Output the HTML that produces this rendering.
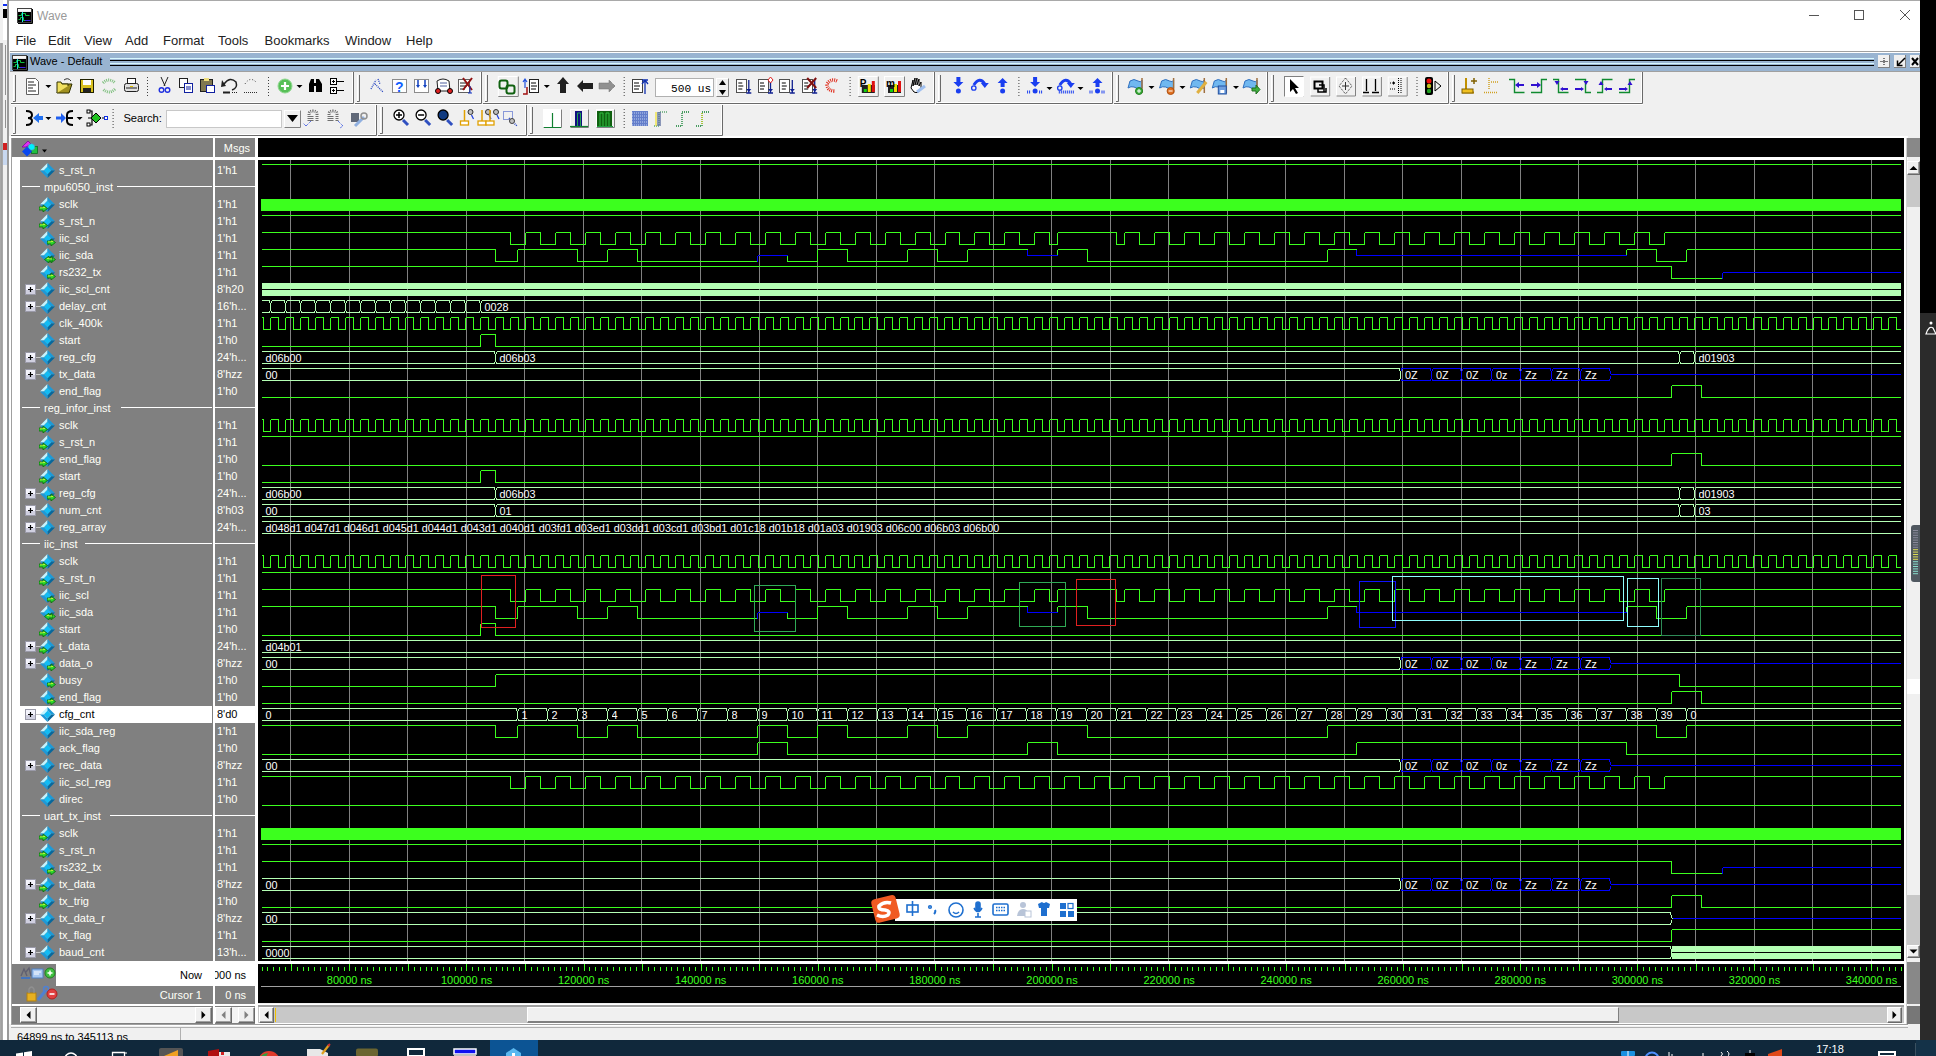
<!DOCTYPE html><html><head><meta charset="utf-8"><style>
html,body{margin:0;padding:0;width:1936px;height:1056px;overflow:hidden;background:#000;}
body{position:relative;font-family:"Liberation Sans", sans-serif;}
div{box-sizing:border-box;}
</style></head><body>
<div style="position:absolute;left:0px;top:0px;width:8px;height:1040px;background:#f0f0f0;"></div>
<div style="position:absolute;left:8px;top:0px;width:1912px;height:1040px;background:#f0f0f0;border-left:1px solid #a0a0a0;"></div>
<div style="position:absolute;left:8px;top:0px;width:1912px;height:1px;background:#a9a9a9;"></div>
<div style="position:absolute;left:9px;top:1px;width:1911px;height:50px;background:#fff;"></div>
<div style="position:absolute;left:37px;top:9px;font-size:12px;line-height:14px;color:#9a9a9a;white-space:nowrap;">Wave</div>
<div style="position:absolute;left:15.4px;top:33px;font-size:13px;line-height:15px;color:#222;white-space:nowrap;">File</div>
<div style="position:absolute;left:48px;top:33px;font-size:13px;line-height:15px;color:#222;white-space:nowrap;">Edit</div>
<div style="position:absolute;left:84px;top:33px;font-size:13px;line-height:15px;color:#222;white-space:nowrap;">View</div>
<div style="position:absolute;left:125px;top:33px;font-size:13px;line-height:15px;color:#222;white-space:nowrap;">Add</div>
<div style="position:absolute;left:163px;top:33px;font-size:13px;line-height:15px;color:#222;white-space:nowrap;">Format</div>
<div style="position:absolute;left:218px;top:33px;font-size:13px;line-height:15px;color:#222;white-space:nowrap;">Tools</div>
<div style="position:absolute;left:264.6px;top:33px;font-size:13px;line-height:15px;color:#222;white-space:nowrap;">Bookmarks</div>
<div style="position:absolute;left:345px;top:33px;font-size:13px;line-height:15px;color:#222;white-space:nowrap;">Window</div>
<div style="position:absolute;left:406px;top:33px;font-size:13px;line-height:15px;color:#222;white-space:nowrap;">Help</div>
<div style="position:absolute;left:10px;top:51px;width:1910px;height:1px;background:#a0a0a0;"></div>
<div style="position:absolute;left:10px;top:52px;width:1910px;height:1px;background:#fff;"></div>
<div style="position:absolute;left:10px;top:53px;width:1910px;height:18px;background:#99b4d1;"></div>
<div style="position:absolute;left:10px;top:71px;width:1910px;height:1px;background:#a0a0a0;"></div>
<div style="position:absolute;left:30px;top:55px;font-size:11px;line-height:13px;color:#000;white-space:nowrap;">Wave - Default</div>
<div style="position:absolute;left:110px;top:58px;width:1764px;height:1px;background:#d8f8ff;"></div>
<div style="position:absolute;left:110px;top:60px;width:1764px;height:1px;background:#000;"></div>
<div style="position:absolute;left:110px;top:63px;width:1764px;height:1px;background:#d8f8ff;"></div>
<div style="position:absolute;left:110px;top:65px;width:1764px;height:1px;background:#000;"></div>
<div style="position:absolute;left:11px;top:138px;width:247px;height:886px;background:#808080;"></div>
<div style="position:absolute;left:258px;top:138px;width:1646px;height:823px;background:#000;"></div>
<svg style="position:absolute;left:0;top:0" width="1936" height="140" fill="none"><path d="M352.5 72V102.5H11" stroke="#fff" fill="none"/><path d="M353.5 72V103.5H11" stroke="#6a6a6a" fill="none"/><path d="M13.5 75V101.5" stroke="#fff" fill="none"/><path d="M15.5 75V101.5H13" stroke="#6a6a6a" fill="none"/><path d="M480.5 72V102.5H355" stroke="#fff" fill="none"/><path d="M481.5 72V103.5H355" stroke="#6a6a6a" fill="none"/><path d="M357.5 75V101.5" stroke="#fff" fill="none"/><path d="M359.5 75V101.5H357" stroke="#6a6a6a" fill="none"/><path d="M933.5 72V102.5H483" stroke="#fff" fill="none"/><path d="M934.5 72V103.5H483" stroke="#6a6a6a" fill="none"/><path d="M485.5 75V101.5" stroke="#fff" fill="none"/><path d="M487.5 75V101.5H485" stroke="#6a6a6a" fill="none"/><path d="M1111.5 72V102.5H936" stroke="#fff" fill="none"/><path d="M1112.5 72V103.5H936" stroke="#6a6a6a" fill="none"/><path d="M938.5 75V101.5" stroke="#fff" fill="none"/><path d="M940.5 75V101.5H938" stroke="#6a6a6a" fill="none"/><path d="M1266.5 72V102.5H1114" stroke="#fff" fill="none"/><path d="M1267.5 72V103.5H1114" stroke="#6a6a6a" fill="none"/><path d="M1116.5 75V101.5" stroke="#fff" fill="none"/><path d="M1118.5 75V101.5H1116" stroke="#6a6a6a" fill="none"/><path d="M1447.5 72V102.5H1269" stroke="#fff" fill="none"/><path d="M1448.5 72V103.5H1269" stroke="#6a6a6a" fill="none"/><path d="M1271.5 75V101.5" stroke="#fff" fill="none"/><path d="M1273.5 75V101.5H1271" stroke="#6a6a6a" fill="none"/><path d="M1641.5 72V102.5H1450" stroke="#fff" fill="none"/><path d="M1642.5 72V103.5H1450" stroke="#6a6a6a" fill="none"/><path d="M1452.5 75V101.5" stroke="#fff" fill="none"/><path d="M1454.5 75V101.5H1452" stroke="#6a6a6a" fill="none"/><path d="M375.5 104V134.5H11" stroke="#fff" fill="none"/><path d="M376.5 104V135.5H11" stroke="#6a6a6a" fill="none"/><path d="M13.5 107V133.5" stroke="#fff" fill="none"/><path d="M15.5 107V133.5H13" stroke="#6a6a6a" fill="none"/><path d="M525.5 104V134.5H378" stroke="#fff" fill="none"/><path d="M526.5 104V135.5H378" stroke="#6a6a6a" fill="none"/><path d="M380.5 107V133.5" stroke="#fff" fill="none"/><path d="M382.5 107V133.5H380" stroke="#6a6a6a" fill="none"/><path d="M721.5 104V134.5H528" stroke="#fff" fill="none"/><path d="M722.5 104V135.5H528" stroke="#6a6a6a" fill="none"/><path d="M530.5 107V133.5" stroke="#fff" fill="none"/><path d="M532.5 107V133.5H530" stroke="#6a6a6a" fill="none"/><path d="M11 104.5H1643" stroke="#fff"/><path d="M26.5 78.5H35.5L38.5 81.5V94.5H26.5Z" fill="#fff" stroke="#606060"/><path d="M28 82H34M28 85H36M28 88H33M28 91H36" stroke="#202020"/><polygon points="45.4,85 51.4,85 48.4,88" fill="#000"/><path d="M57 93L60 84H72L69 93Z" fill="#a09020" stroke="#303000"/><path d="M57 93V82H61L62 84H68V86" fill="#f0e060" stroke="#303000"/><path d="M64 80Q68 77 71 81" stroke="#303030" fill="none"/><rect x="80.5" y="79.5" width="13" height="13" fill="#d8c020" stroke="#202000"/><rect x="83" y="80" width="8" height="5" fill="#fff"/><rect x="83" y="88" width="8" height="4" fill="#202020"/><path d="M103 83Q109 77 115 83M115 89Q109 95 103 89" stroke="#80c080" stroke-width="3" fill="none" stroke-dasharray="1 1"/><rect x="124.5" y="83.5" width="14" height="8" rx="2" fill="#e0e0e0" stroke="#202020"/><rect x="127.5" y="78.5" width="8" height="5" fill="#fff" stroke="#202020"/><path d="M126 88H137" stroke="#202020"/><rect x="130" y="86" width="3" height="1" fill="#e0c000"/><path d="M147.5 77V96" stroke="#404040" stroke-dasharray="1 2"/><path d="M161 77L165 86M168 77L164 86" stroke="#202020"/><circle cx="161.5" cy="90" r="2.3" fill="none" stroke="#2030e0" stroke-width="1.4"/><circle cx="167.5" cy="90" r="2.3" fill="none" stroke="#2030e0" stroke-width="1.4"/><rect x="179.5" y="78.5" width="8" height="9" fill="#fff" stroke="#202020"/><rect x="184.5" y="83.5" width="8" height="9" fill="#fff" stroke="#1020a0"/><path d="M186 87H191M186 89H191" stroke="#1020a0"/><rect x="200.5" y="79.5" width="12" height="12" fill="#807850" stroke="#202020"/><rect x="204" y="78" width="5" height="3" fill="#f0e080"/><rect x="206.5" y="85.5" width="8" height="7" fill="#fff" stroke="#1020a0"/><path d="M224 84Q230 76 236 82Q238 88 232 90" stroke="#202020" stroke-width="1.5" fill="none"/><polygon points="222,80 226,86 221,87" fill="#202020"/><path d="M223 92.5H230" stroke="#202020" stroke-width="2"/><path d="M232 92.5H237" stroke="#202020" stroke-dasharray="1 1"/><path d="M245 84Q250 76 256 82" stroke="#303030" fill="none" stroke-dasharray="1 2"/><path d="M244 92.5H258" stroke="#303030" stroke-dasharray="1 1"/><path d="M268.5 77V96" stroke="#404040" stroke-dasharray="1 2"/><circle cx="285" cy="86" r="7" fill="#58c058" stroke="#90d890"/><path d="M281 86H289M285 82V90" stroke="#fff" stroke-width="2.2"/><polygon points="296.5,85 302.5,85 299.5,88" fill="#000"/><path d="M309 92V84L311 79H314V92ZM316 92V79H319L322 84V92Z" fill="#000"/><rect x="313" y="83" width="4" height="3" fill="#000"/><rect x="330.5" y="78.5" width="6" height="6" fill="#fff" stroke="#000"/><rect x="330.5" y="87.5" width="6" height="6" fill="#fff" stroke="#000"/><path d="M332 81.5H335M333.5 80V83M332 90.5H335M333.5 89V92M337 81.5H344M337 90.5H344" stroke="#000"/><path d="M371 89L376 80M375 84L383 92M378 79L380 84" stroke="#2040c0" stroke-dasharray="1 1" stroke-width="1.3"/><rect x="392.5" y="79.5" width="14" height="13" fill="#fff" stroke="#202020" stroke-dasharray="1 1"/><text x="395" y="92" font-size="14" font-weight="bold" fill="#1060ff" font-family="Liberation Sans">?</text><rect x="414.5" y="79.5" width="14" height="13" fill="#fff" stroke="#202020" stroke-dasharray="1 1"/><path d="M418 80V86M425 80V86" stroke="#1040c0" stroke-width="1.5"/><polygon points="416,85 420,85 418,88" fill="#1040c0"/><polygon points="423,85 427,85 425,88" fill="#1040c0"/><path d="M437 81Q443 77 449 81L450 91H438Z" fill="#fff" stroke="#202020"/><circle cx="438" cy="91" r="2.5" fill="#e02020" stroke="#000"/><circle cx="450" cy="91" r="2.5" fill="#e02020" stroke="#000"/><path d="M440 83H447M440 86H447" stroke="#5060a0"/><rect x="458.5" y="79.5" width="11" height="13" fill="#fff" stroke="#606060"/><path d="M460 83H467M460 86H467M460 89H465" stroke="#202020"/><path d="M463 78L472 90M472 78L463 90" stroke="#901010" stroke-width="2"/><path d="M470 86V93M468 93H472" stroke="#1030c0"/><rect x="498.3" y="76.5" width="20" height="20" fill="#f0f0f0" stroke="#fff"/><path d="M518.3 76.5V96.5H498.3" stroke="#808080" fill="none"/><rect x="499.5" y="80.5" width="8" height="8" rx="2" fill="none" stroke="#106010" stroke-width="2"/><rect x="506.5" y="85.5" width="8" height="8" rx="2" fill="none" stroke="#106010" stroke-width="2"/><rect x="529.5" y="79.5" width="9" height="13" fill="#fff" stroke="#202020"/><path d="M531 83H536M531 86H537M531 89H536" stroke="#000"/><path d="M525 88V80M523 82L525 79L527 82" stroke="#2050e0" stroke-width="1.2" fill="none"/><path d="M527 87V94H523" stroke="#a01010" stroke-width="1.5" fill="none"/><polygon points="543.8,85 549.8,85 546.8,88" fill="#000"/><polygon points="563,77 569,84 566,84 566,93 560,93 560,84 557,84" fill="#202020"/><polygon points="577,86 583,80 583,83 593,83 593,89 583,89 583,92" fill="#202020"/><polygon points="615,86 609,80 609,83 599,83 599,89 609,89 609,92" fill="#909090" stroke="#707070" stroke-dasharray="1 1"/><path d="M624.2 77V96" stroke="#404040" stroke-dasharray="1 2"/><rect x="632.5" y="79.5" width="10" height="13" fill="#fff" stroke="#404040"/><path d="M634 83H639M634 86H640M634 89H639" stroke="#000"/><path d="M645 80V94M642 84L645 80L648 84M642 80H648" stroke="#1030b0" stroke-width="1.3" fill="none"/><rect x="655.5" y="78.5" width="58" height="18" fill="#fff" stroke="#b0b0b0"/><text x="671" y="91.5" font-size="11.2" fill="#000" font-family="Liberation Mono">500 us</text><rect x="716.5" y="78.5" width="12" height="18" fill="#f0f0f0" stroke="#fff"/><path d="M728.5 78.5V96.5H716.5" stroke="#808080" fill="none"/><polygon points="719,85 726,85 722.5,80" fill="#000"/><polygon points="719,90 726,90 722.5,95" fill="#000"/><rect x="736.5" y="79.5" width="10" height="13" fill="#fff" stroke="#505050"/><path d="M738.3 83H742.3M738.3 86H743.3M738.3 89H742.3" stroke="#000"/><path d="M748.8 80V93M746.3 93H751.3" stroke="#102090" stroke-width="1.3"/><polygon points="746.3,89 751.3,89 748.8,92" fill="#102090"/><rect x="758.5" y="79.5" width="10" height="13" fill="#fff" stroke="#505050"/><path d="M760 83H764M760 86H765M760 89H764" stroke="#000"/><path d="M770.5 80V93M768 93H773" stroke="#102090" stroke-width="1.3"/><polygon points="768,89 773,89 770.5,92" fill="#102090"/><polygon points="770.5,77 773,80 770.5,83 768,80" fill="#fff" stroke="#e02020"/><rect x="779.5" y="79.5" width="10" height="13" fill="#fff" stroke="#505050"/><path d="M781.8 83H785.8M781.8 86H786.8M781.8 89H785.8" stroke="#000"/><path d="M792.3 80V93M789.8 93H794.8" stroke="#102090" stroke-width="1.3"/><polygon points="789.8,89 794.8,89 792.3,92" fill="#102090"/><rect x="802.5" y="79.5" width="10" height="13" fill="#fff" stroke="#505050"/><path d="M804.2 83H808.2M804.2 86H809.2M804.2 89H808.2" stroke="#000"/><path d="M814.7 80V93M812.2 93H817.2" stroke="#102090" stroke-width="1.3"/><polygon points="812.2,89 817.2,89 814.7,92" fill="#102090"/><path d="M807.2 78L816.2 88M816.2 78L807.2 88" stroke="#801010" stroke-width="2"/><path d="M837 81Q831 78 827 84Q827 91 835 91" stroke="#e03020" stroke-width="3.5" fill="none" stroke-dasharray="1 1"/><path d="M850.1 77V96" stroke="#404040" stroke-dasharray="1 2"/><rect x="858.3" y="76.5" width="20" height="20" fill="#f0f0f0" stroke="#fff"/><path d="M878.3 76.5V96.5H858.3" stroke="#808080" fill="none"/><rect x="861.8" y="85" width="13" height="8" fill="#202020"/><rect x="863.8" y="89" width="3" height="3" fill="#10d010"/><rect x="867.8" y="84" width="3" height="8" fill="#f0e000"/><rect x="871.8" y="81" width="3" height="11" fill="#e01010"/><text x="859.8" y="87" font-size="10" font-weight="bold" fill="#000" font-family="Liberation Sans">P</text><rect x="884.5" y="76.5" width="20" height="20" fill="#f0f0f0" stroke="#fff"/><path d="M904.5 76.5V96.5H884.5" stroke="#808080" fill="none"/><rect x="888" y="85" width="13" height="8" fill="#202020"/><rect x="890" y="89" width="3" height="3" fill="#10d010"/><rect x="894" y="84" width="3" height="8" fill="#f0e000"/><rect x="898" y="81" width="3" height="11" fill="#e01010"/><text x="886" y="87" font-size="10" font-weight="bold" fill="#000" font-family="Liberation Sans">m</text><path d="M911 88L913 80V86L915 78V85L917 78V85L919 79V86L921 82V89Q918 94 914 92Z" fill="#fff" stroke="#000"/><path d="M917 92L925 86" stroke="#a0c0f0" stroke-width="3"/><polygon points="958.4,87 963.4,82 960.4,82 960.4,77 956.4,77 956.4,82 953.4,82" fill="#1a3ef0"/><circle cx="958.4" cy="91" r="2.5" fill="#1a3ef0"/><path d="M973.8 85Q979.8 76 984.8 84" stroke="#1a3ef0" stroke-width="3" fill="none"/><polygon points="980.8,83 988.8,83 984.8,88" fill="#1a3ef0"/><circle cx="973.8" cy="88" r="2.2" fill="none" stroke="#1a3ef0" stroke-width="1.3"/><polygon points="1002.6,78 1007.6,83 1004.6,83 1004.6,87 1000.6,87 1000.6,83 997.6,83" fill="#1a3ef0"/><circle cx="1002.6" cy="91" r="2.5" fill="#1a3ef0"/><path d="M1018.9 77V96" stroke="#404040" stroke-dasharray="1 2"/><polygon points="1035.1,87 1040.1,82 1037.1,82 1037.1,77 1033.1,77 1033.1,82 1030.1,82" fill="#1a3ef0"/><circle cx="1035.1" cy="91" r="2.5" fill="#1a3ef0"/><path d="M1027.1 92H1031.1M1039.1 92H1043.1" stroke="#1a3ef0" stroke-width="3" stroke-dasharray="1 1"/><polygon points="1046.5,87 1052.5,87 1049.5,90" fill="#000"/><path d="M1059.8 85Q1065.8 76 1070.8 84" stroke="#1a3ef0" stroke-width="3" fill="none"/><polygon points="1066.8,83 1074.8,83 1070.8,88" fill="#1a3ef0"/><circle cx="1059.8" cy="88" r="2.2" fill="none" stroke="#1a3ef0" stroke-width="1.3"/><path d="M1058.8 92H1073.8" stroke="#1a3ef0" stroke-width="3" stroke-dasharray="1 1"/><polygon points="1077.5,87 1083.5,87 1080.5,90" fill="#000"/><polygon points="1097.5,78 1102.5,83 1099.5,83 1099.5,87 1095.5,87 1095.5,83 1092.5,83" fill="#1a3ef0"/><circle cx="1097.5" cy="91" r="2.5" fill="#1a3ef0"/><path d="M1089.5 92H1093.5M1101.5 92H1105.5" stroke="#1a3ef0" stroke-width="3" stroke-dasharray="1 1"/><path d="M1130 81Q1134 78 1138 81Q1141 83 1142 80V88Q1138 90 1134 87Q1131 86 1128 88Z" fill="#70b8f0" stroke="#3070c0"/><path d="M1142 78V93" stroke="#a07040" stroke-width="1.5"/><circle cx="1139" cy="91" r="3.5" fill="#40b040" stroke="#208020"/><path d="M1137 91H1141M1139 89V93" stroke="#fff"/><polygon points="1148.5,86 1154.5,86 1151.5,89" fill="#000"/><path d="M1161.6 81Q1165.6 78 1169.6 81Q1172.6 83 1173.6 80V88Q1169.6 90 1165.6 87Q1162.6 86 1159.6 88Z" fill="#70b8f0" stroke="#3070c0"/><path d="M1173.6 78V93" stroke="#a07040" stroke-width="1.5"/><circle cx="1170.6" cy="91" r="3.5" fill="#e07020" stroke="#b05010"/><path d="M1168.6 91H1172.6" stroke="#fff"/><polygon points="1179.5,86 1185.5,86 1182.5,89" fill="#000"/><path d="M1192.3 81Q1196.3 78 1200.3 81Q1203.3 83 1204.3 80V88Q1200.3 90 1196.3 87Q1193.3 86 1190.3 88Z" fill="#70b8f0" stroke="#3070c0"/><path d="M1204.3 78V93" stroke="#a07040" stroke-width="1.5"/><path d="M1197.3 93L1206.3 82" stroke="#e0b040" stroke-width="3"/><path d="M1214.3 81Q1218.3 78 1222.3 81Q1225.3 83 1226.3 80V88Q1222.3 90 1218.3 87Q1215.3 86 1212.3 88Z" fill="#70b8f0" stroke="#3070c0"/><path d="M1226.3 78V93" stroke="#a07040" stroke-width="1.5"/><rect x="1218.3" y="86" width="8" height="8" fill="#70a0e0" stroke="#2050a0"/><rect x="1220.3" y="90" width="4" height="3" fill="#fff"/><polygon points="1233,86 1239,86 1236,89" fill="#000"/><path d="M1245 81Q1249 78 1253 81Q1256 83 1257 80V88Q1253 90 1249 87Q1246 86 1243 88Z" fill="#70b8f0" stroke="#3070c0"/><path d="M1257 78V93" stroke="#a07040" stroke-width="1.5"/><polygon points="1252,88 1256,88 1256,85 1260,89.5 1256,94 1256,91 1252,91" fill="#40b040" stroke="#207020"/><rect x="1284.5" y="76.5" width="19" height="20" fill="#fff" stroke="#808080"/><path d="M1303.5 76.5V96.5H1284.5" stroke="#fff" fill="none"/><polygon points="1290,79 1290,92 1293,89 1296,94 1298,93 1295,88 1299,88" fill="#000"/><rect x="1310.7" y="77.0" width="19" height="19" fill="#f0f0f0" stroke="#fff"/><path d="M1329.7 77.0V96.0H1310.7" stroke="#808080" fill="none"/><rect x="1336.5" y="77.0" width="19" height="19" fill="#f0f0f0" stroke="#fff"/><path d="M1355.5 77.0V96.0H1336.5" stroke="#808080" fill="none"/><rect x="1362.4" y="77.0" width="19" height="19" fill="#f0f0f0" stroke="#fff"/><path d="M1381.4 77.0V96.0H1362.4" stroke="#808080" fill="none"/><rect x="1388.2" y="77.0" width="19" height="19" fill="#f0f0f0" stroke="#fff"/><path d="M1407.2 77.0V96.0H1388.2" stroke="#808080" fill="none"/><rect x="1314.5" y="81.5" width="8" height="7" fill="none" stroke="#000" stroke-width="2"/><path d="M1319 85H1324V92H1318V88M1322 92L1326 92L1326 88" stroke="#000" stroke-width="1.5" fill="none"/><path d="M1345.5 78L1352 86L1345.5 94L1339 86Z" fill="none" stroke="#303030" stroke-dasharray="1 1"/><path d="M1342 86H1349M1345.5 82V90" stroke="#303030"/><path d="M1366.5 79V91M1375.5 79V91M1363 92.5H1369M1372 92.5H1379" stroke="#000" stroke-width="1.3"/><path d="M1390 83H1395M1390 89H1395M1398.5 78V94M1401 78V94" stroke="#000" stroke-dasharray="1 1"/><polygon points="1393,81 1395,83 1393,85" fill="#000"/><path d="M1417.0 77V96" stroke="#404040" stroke-dasharray="1 2"/><rect x="1425" y="77" width="8" height="18" rx="2" fill="#000"/><circle cx="1429" cy="81" r="2.5" fill="#f01010"/><circle cx="1429" cy="86" r="2.2" fill="#c0c020"/><circle cx="1429" cy="91" r="2.2" fill="#20a020"/><polygon points="1435,81 1441,86 1435,91" fill="none" stroke="#000"/><path d="M1466 90V78M1462 92.5H1474" stroke="#c09000" stroke-width="2"/><rect x="1462" y="89" width="11" height="4" fill="#f0c020" stroke="#806000"/><path d="M1474 78V84M1471 81H1477" stroke="#806000" stroke-width="1.5"/><path d="M1489 78V90M1484 92.5H1497M1491 82H1498" stroke="#d0a020" stroke-width="1.5" stroke-dasharray="1 1"/><path d="M1509 79.5H1514.5V92.5H1524.5" stroke="#108a30" stroke-width="1.4"/><polygon points="1515,85 1519,82 1519,84 1524,84 1524,86 1519,86 1519,88" fill="#3010d0"/><path d="M1531 92.5H1541.5V79.5H1547" stroke="#108a30" stroke-width="1.4"/><polygon points="1541,85 1537,82 1537,84 1531,84 1531,86 1537,86 1537,88" fill="#3010d0"/><path d="M1553 79.5H1558.5V92.5H1568.5" stroke="#108a30" stroke-width="1.4"/><polygon points="1554.5,81 1559.5,81 1557,85" fill="#3010d0"/><polygon points="1560,89 1563,87 1563,88 1568,88 1568,90 1563,90 1563,91" fill="#3010d0"/><path d="M1575 79.5H1585.5V92.5H1591" stroke="#108a30" stroke-width="1.4"/><polygon points="1583.5,81 1588.5,81 1586,85" fill="#3010d0"/><polygon points="1584,89 1581,87 1581,88 1575,88 1575,90 1581,90 1581,91" fill="#3010d0"/><path d="M1597 92.5H1602.5V79.5H1612.5" stroke="#108a30" stroke-width="1.4"/><polygon points="1598.5,85 1603.5,85 1601,81" fill="#3010d0"/><polygon points="1604,89 1607,87 1607,88 1612,88 1612,90 1607,90 1607,91" fill="#3010d0"/><path d="M1619 92.5H1629.5V79.5H1635" stroke="#108a30" stroke-width="1.4"/><polygon points="1627.5,85 1632.5,85 1630,81" fill="#3010d0"/><polygon points="1628,89 1625,87 1625,88 1619,88 1619,90 1625,90 1625,91" fill="#3010d0"/><path d="M26 111Q32 111 32 115Q32 118 28 118Q32 118 32 121Q32 125 26 125" stroke="#000" stroke-width="2" fill="none"/><polygon points="33,118 39,113 39,116 43,116 43,120 39,120 39,123" fill="#2070f0"/><polygon points="45.4,117 51.4,117 48.4,120" fill="#000"/><polygon points="56,116.5 61,116.5 61,113 66,118 61,123 61,119.5 56,119.5" fill="#2060f0"/><path d="M73 111Q67 111 67 115V121Q67 125 73 125M68 118H73" stroke="#000" stroke-width="2" fill="none"/><polygon points="76.6,117 82.6,117 79.6,120" fill="#000"/><path d="M88 111H92V125H88M92 118H97M88 118H92" stroke="#000" fill="none" stroke-width="1.2"/><rect x="87" y="110" width="3" height="3" fill="#fff" stroke="#000"/><rect x="87" y="123" width="3" height="3" fill="#fff" stroke="#000"/><polygon points="96,113 101,118 96,123 91,118" fill="#20c020" stroke="#000"/><path d="M102 118H105" stroke="#000"/><rect x="104.5" y="116.5" width="3" height="3" fill="#fff" stroke="#1030e0"/><path d="M113.1 109V128" stroke="#404040" stroke-dasharray="1 2"/><text x="123.4" y="122" font-size="11.2" fill="#000" font-family="Liberation Sans">Search:</text><rect x="166.5" y="110.5" width="115" height="17" fill="#fff" stroke="#c8c8c8"/><rect x="284.5" y="110.5" width="16" height="17" fill="#f0f0f0" stroke="#fff"/><path d="M300.5 110.5V127.5H284.5" stroke="#808080" fill="none"/><polygon points="287,115 298,115 292.5,122" fill="#000"/><path d="M309 121V114Q309 111 313 111Q317 111 317 114V121M312 121V115" stroke="#707070" stroke-width="3" fill="none" stroke-dasharray="1 1"/><path d="M306 126L311 121M306 126L303 123" stroke="#2040e0" stroke-dasharray="1 1"/><path d="M329 121V114Q329 111 333 111Q337 111 337 114V121M332 121V115" stroke="#707070" stroke-width="3" fill="none" stroke-dasharray="1 1"/><path d="M338 121L343 126L340 128" stroke="#2040e0" stroke-dasharray="1 1"/><rect x="351" y="113" width="8" height="9" fill="#606878"/><path d="M355 126L364 117" stroke="#90b0e0" stroke-width="3"/><circle cx="364" cy="116" r="3" fill="none" stroke="#909090" stroke-width="1.5"/><path d="M403 120L408 125" stroke="#3050c0" stroke-width="3"/><circle cx="399" cy="115" r="5" fill="#fff" stroke="#000" stroke-width="1.3"/><path d="M396 115H402M399 112V118" stroke="#000" stroke-width="1.5"/><path d="M425.1 120L430.1 125" stroke="#3050c0" stroke-width="3"/><circle cx="421.1" cy="115" r="5" fill="#fff" stroke="#000" stroke-width="1.3"/><path d="M418.1 115H424.1" stroke="#000" stroke-width="1.5"/><path d="M447.1 120L452.1 125" stroke="#3050c0" stroke-width="3"/><circle cx="443.1" cy="115" r="5" fill="#103a80" stroke="#000" stroke-width="1.3"/><path d="M464.5 110V122" stroke="#e0a000" stroke-width="1.5"/><rect x="460.5" y="121" width="8" height="4" fill="#fff" stroke="#e0a000" stroke-width="1.3"/><circle cx="470.5" cy="112" r="2.5" fill="#c0c0c0" stroke="#303030"/><path d="M471.5 115L473.5 119" stroke="#2040e0" stroke-width="1.3"/><path d="M482 110V122" stroke="#e0a000" stroke-width="1.5"/><rect x="478" y="121" width="8" height="4" fill="#fff" stroke="#e0a000" stroke-width="1.3"/><circle cx="488" cy="112" r="2.5" fill="#c0c0c0" stroke="#303030"/><path d="M489 115L491 119" stroke="#2040e0" stroke-width="1.3"/><path d="M490 110V122" stroke="#e0a000" stroke-width="1.5"/><rect x="486" y="121" width="8" height="4" fill="#fff" stroke="#e0a000" stroke-width="1.3"/><circle cx="496" cy="112" r="2.5" fill="#c0c0c0" stroke="#303030"/><path d="M497 115L499 119" stroke="#2040e0" stroke-width="1.3"/><rect x="503.5" y="111.5" width="9" height="8" fill="none" stroke="#2040c0" stroke-dasharray="1 1"/><path d="M509 118L517 126" stroke="#2040c0" stroke-width="1.5" stroke-dasharray="1 1"/><circle cx="512" cy="121" r="2.5" fill="#c0c0c0" stroke="#404040"/><rect x="543.5" y="109.5" width="18" height="18" fill="#fff" stroke="#fff"/><path d="M561.5 109.5V127.5H543.5" stroke="#808080" fill="none"/><rect x="570.5" y="109.5" width="18" height="18" fill="#f0f0f0" stroke="#fff"/><path d="M588.5 109.5V127.5H570.5" stroke="#808080" fill="none"/><rect x="596.5" y="109.5" width="18" height="18" fill="#f0f0f0" stroke="#fff"/><path d="M614.5 109.5V127.5H596.5" stroke="#808080" fill="none"/><path d="M544 127.5H561M552.5 127V113" stroke="#108030" stroke-width="1.2"/><rect x="575" y="111" width="7" height="15" fill="#101080"/><path d="M570 126.5H588" stroke="#108030" stroke-width="1.2"/><path d="M577.5 126V113H580.5V126" stroke="#20a050" fill="none"/><rect x="597" y="111" width="15" height="15" fill="#106010"/><path d="M597 126.5H613" stroke="#20a040"/><path d="M600 126V113H603V126M606 126V113H609V126" stroke="#30c040" fill="none"/><path d="M624.2 109V128" stroke="#404040" stroke-dasharray="1 2"/><rect x="632" y="111" width="16" height="15" fill="#4060c0" opacity="0.8"/><path d="M632 113H648M632 116H648M632 119H648M632 122H648M632 125H648" stroke="#c0d0f0" stroke-dasharray="1 1"/><path d="M654 126H659V112H667" stroke="#108030" stroke-dasharray="1 1"/><rect x="657" y="112" width="4" height="14" fill="#6070a0" opacity="0.7"/><path d="M656 112V126" stroke="#f0e000"/><path d="M676 126H682V112H690" stroke="#108030" stroke-dasharray="1 1" stroke-width="1.3"/><path d="M696 126H702V112H710" stroke="#108030" stroke-dasharray="1 1" stroke-width="1.3"/><path d="M702 113V125" stroke="#f0e000" stroke-dasharray="1 1"/></svg>
<svg width="0" height="0" style="position:absolute"><defs>
<symbol id="dia" viewBox="0 0 15 15">
<polygon points="7.5,0 0,7.5 3.8,7.5 7.5,3.8" fill="#c4f4ff"/>
<polygon points="7.5,0 15,7.5 11.2,7.5 7.5,3.8" fill="#1c9ad8"/>
<polygon points="15,7.5 7.5,15 7.5,11.2 11.2,7.5" fill="#08689c"/>
<polygon points="0,7.5 7.5,15 7.5,11.2 3.8,7.5" fill="#1e98d8"/>
<polygon points="7.5,3.8 11.2,7.5 7.5,11.2 3.8,7.5" fill="#12bcf4"/>
</symbol>
<symbol id="arr" viewBox="0 0 9 7">
<polygon points="0,2 4,2 4,0 8.5,3.5 4,7 4,5 0,5" fill="#2bd42b" stroke="#0a6a0a" stroke-width="0.8"/>
<polygon points="1,2.6 4.6,2.6 4.6,1.4 6.5,3 1,3.3" fill="#e8ff40"/>
</symbol>
<symbol id="plus" viewBox="0 0 11 11">
<rect x="0.5" y="0.5" width="10" height="10" fill="#f4f4fc" stroke="#9a9aa8"/>
<rect x="1" y="6" width="9" height="4" fill="#d0d0e0"/>
<path d="M3 5.5H8M5.5 3V8" stroke="#000" stroke-width="1.2"/>
</symbol>
</defs></svg>
<div style="position:absolute;left:11px;top:138px;width:247px;height:19px;background:#808080"></div>
<div style="position:absolute;left:11px;top:136px;width:1897px;height:2px;background:#fff"></div>
<div style="position:absolute;left:11px;top:157px;width:1897px;height:3px;background:#fff"></div>
<svg style="position:absolute;left:18px;top:136px" width="40" height="22" viewBox="0 0 40 22"><polygon points="4,11 10,5 13,8 8,11" fill="#e030f0" stroke="#8000a0" stroke-width="0.8"/><rect x="13.5" y="10.5" width="6" height="7" fill="#20c040" stroke="#107020" stroke-width="0.8"/><circle cx="13.5" cy="11" r="3.3" fill="#00f0ff" stroke="#6090b0" stroke-width="0.7"/><polygon points="9,10.5 14,15.5 9,20.5 4,15.5" fill="#0848f0"/><polygon points="24,13.5 29,13.5 26.5,16.5" fill="#000"/></svg>
<div style="position:absolute;left:215px;top:142px;width:35px;text-align:right;font-size:11px;line-height:13px;color:#fffff8">Msgs</div>
<div style="position:absolute;left:11px;top:160px;width:9px;height:802px;background:#fff"></div>
<div style="position:absolute;left:20px;top:160px;width:193px;height:802px;background:#808080"></div>
<div style="position:absolute;left:213px;top:138px;width:2px;height:886px;background:#fff"></div>
<div style="position:absolute;left:215px;top:160px;width:40px;height:802px;background:#808080"></div>
<div style="position:absolute;left:255px;top:138px;width:3px;height:886px;background:#fff"></div>
<div style="position:absolute;left:11px;top:157px;width:1px;height:867px;background:#fff"></div>
<svg style="position:absolute;left:40px;top:163px" width="15" height="15"><use href="#dia"/></svg>
<div style="position:absolute;left:59px;top:164px;font-size:11px;line-height:13px;color:#fffff8;white-space:nowrap">s_rst_n</div>
<div style="position:absolute;left:217px;top:164px;font-size:11px;line-height:13px;color:#fffff8;white-space:nowrap">1'h1</div>
<div style="position:absolute;left:22px;top:186px;width:18px;height:1px;background:#fff"></div>
<div style="position:absolute;left:44px;top:181px;font-size:11px;line-height:13px;color:#fffff8;white-space:nowrap">mpu6050_inst</div>
<div style="position:absolute;left:117px;top:186px;width:95px;height:1px;background:#fff"></div>
<div style="position:absolute;left:215px;top:186px;width:40px;height:1px;background:#fff"></div>
<svg style="position:absolute;left:40px;top:197px" width="15" height="15"><use href="#dia"/></svg>
<svg style="position:absolute;left:39px;top:205px" width="9" height="7"><use href="#arr"/></svg>
<div style="position:absolute;left:59px;top:198px;font-size:11px;line-height:13px;color:#fffff8;white-space:nowrap">sclk</div>
<div style="position:absolute;left:217px;top:198px;font-size:11px;line-height:13px;color:#fffff8;white-space:nowrap">1'h1</div>
<svg style="position:absolute;left:40px;top:214px" width="15" height="15"><use href="#dia"/></svg>
<svg style="position:absolute;left:39px;top:222px" width="9" height="7"><use href="#arr"/></svg>
<div style="position:absolute;left:59px;top:215px;font-size:11px;line-height:13px;color:#fffff8;white-space:nowrap">s_rst_n</div>
<div style="position:absolute;left:217px;top:215px;font-size:11px;line-height:13px;color:#fffff8;white-space:nowrap">1'h1</div>
<svg style="position:absolute;left:40px;top:231px" width="15" height="15"><use href="#dia"/></svg>
<svg style="position:absolute;left:47px;top:239px" width="9" height="7"><use href="#arr"/></svg>
<div style="position:absolute;left:59px;top:232px;font-size:11px;line-height:13px;color:#fffff8;white-space:nowrap">iic_scl</div>
<div style="position:absolute;left:217px;top:232px;font-size:11px;line-height:13px;color:#fffff8;white-space:nowrap">1'h1</div>
<svg style="position:absolute;left:40px;top:248px" width="15" height="15"><use href="#dia"/></svg>
<svg style="position:absolute;left:47px;top:256px" width="9" height="7"><use href="#arr"/></svg>
<svg style="position:absolute;left:44px;top:256px;transform:scaleX(-1)" width="9" height="7"><use href="#arr"/></svg>
<div style="position:absolute;left:59px;top:249px;font-size:11px;line-height:13px;color:#fffff8;white-space:nowrap">iic_sda</div>
<div style="position:absolute;left:217px;top:249px;font-size:11px;line-height:13px;color:#fffff8;white-space:nowrap">1'h1</div>
<svg style="position:absolute;left:40px;top:265px" width="15" height="15"><use href="#dia"/></svg>
<svg style="position:absolute;left:47px;top:273px" width="9" height="7"><use href="#arr"/></svg>
<div style="position:absolute;left:59px;top:266px;font-size:11px;line-height:13px;color:#fffff8;white-space:nowrap">rs232_tx</div>
<div style="position:absolute;left:217px;top:266px;font-size:11px;line-height:13px;color:#fffff8;white-space:nowrap">1'h1</div>
<svg style="position:absolute;left:25px;top:284px" width="11" height="11"><use href="#plus"/></svg>
<div style="position:absolute;left:36px;top:289px;width:5px;height:1px;background:#c8c8c8"></div>
<svg style="position:absolute;left:40px;top:282px" width="15" height="15"><use href="#dia"/></svg>
<div style="position:absolute;left:59px;top:283px;font-size:11px;line-height:13px;color:#fffff8;white-space:nowrap">iic_scl_cnt</div>
<div style="position:absolute;left:217px;top:283px;font-size:11px;line-height:13px;color:#fffff8;white-space:nowrap">8'h20</div>
<svg style="position:absolute;left:25px;top:301px" width="11" height="11"><use href="#plus"/></svg>
<div style="position:absolute;left:36px;top:306px;width:5px;height:1px;background:#c8c8c8"></div>
<svg style="position:absolute;left:40px;top:299px" width="15" height="15"><use href="#dia"/></svg>
<div style="position:absolute;left:59px;top:300px;font-size:11px;line-height:13px;color:#fffff8;white-space:nowrap">delay_cnt</div>
<div style="position:absolute;left:217px;top:300px;font-size:11px;line-height:13px;color:#fffff8;white-space:nowrap">16'h...</div>
<svg style="position:absolute;left:40px;top:316px" width="15" height="15"><use href="#dia"/></svg>
<div style="position:absolute;left:59px;top:317px;font-size:11px;line-height:13px;color:#fffff8;white-space:nowrap">clk_400k</div>
<div style="position:absolute;left:217px;top:317px;font-size:11px;line-height:13px;color:#fffff8;white-space:nowrap">1'h1</div>
<svg style="position:absolute;left:40px;top:333px" width="15" height="15"><use href="#dia"/></svg>
<div style="position:absolute;left:59px;top:334px;font-size:11px;line-height:13px;color:#fffff8;white-space:nowrap">start</div>
<div style="position:absolute;left:217px;top:334px;font-size:11px;line-height:13px;color:#fffff8;white-space:nowrap">1'h0</div>
<svg style="position:absolute;left:25px;top:352px" width="11" height="11"><use href="#plus"/></svg>
<div style="position:absolute;left:36px;top:357px;width:5px;height:1px;background:#c8c8c8"></div>
<svg style="position:absolute;left:40px;top:350px" width="15" height="15"><use href="#dia"/></svg>
<div style="position:absolute;left:59px;top:351px;font-size:11px;line-height:13px;color:#fffff8;white-space:nowrap">reg_cfg</div>
<div style="position:absolute;left:217px;top:351px;font-size:11px;line-height:13px;color:#fffff8;white-space:nowrap">24'h...</div>
<svg style="position:absolute;left:25px;top:369px" width="11" height="11"><use href="#plus"/></svg>
<div style="position:absolute;left:36px;top:374px;width:5px;height:1px;background:#c8c8c8"></div>
<svg style="position:absolute;left:40px;top:367px" width="15" height="15"><use href="#dia"/></svg>
<div style="position:absolute;left:59px;top:368px;font-size:11px;line-height:13px;color:#fffff8;white-space:nowrap">tx_data</div>
<div style="position:absolute;left:217px;top:368px;font-size:11px;line-height:13px;color:#fffff8;white-space:nowrap">8'hzz</div>
<svg style="position:absolute;left:40px;top:384px" width="15" height="15"><use href="#dia"/></svg>
<div style="position:absolute;left:59px;top:385px;font-size:11px;line-height:13px;color:#fffff8;white-space:nowrap">end_flag</div>
<div style="position:absolute;left:217px;top:385px;font-size:11px;line-height:13px;color:#fffff8;white-space:nowrap">1'h0</div>
<div style="position:absolute;left:22px;top:407px;width:18px;height:1px;background:#fff"></div>
<div style="position:absolute;left:44px;top:402px;font-size:11px;line-height:13px;color:#fffff8;white-space:nowrap">reg_infor_inst</div>
<div style="position:absolute;left:121px;top:407px;width:91px;height:1px;background:#fff"></div>
<div style="position:absolute;left:215px;top:407px;width:40px;height:1px;background:#fff"></div>
<svg style="position:absolute;left:40px;top:418px" width="15" height="15"><use href="#dia"/></svg>
<svg style="position:absolute;left:39px;top:426px" width="9" height="7"><use href="#arr"/></svg>
<div style="position:absolute;left:59px;top:419px;font-size:11px;line-height:13px;color:#fffff8;white-space:nowrap">sclk</div>
<div style="position:absolute;left:217px;top:419px;font-size:11px;line-height:13px;color:#fffff8;white-space:nowrap">1'h1</div>
<svg style="position:absolute;left:40px;top:435px" width="15" height="15"><use href="#dia"/></svg>
<svg style="position:absolute;left:39px;top:443px" width="9" height="7"><use href="#arr"/></svg>
<div style="position:absolute;left:59px;top:436px;font-size:11px;line-height:13px;color:#fffff8;white-space:nowrap">s_rst_n</div>
<div style="position:absolute;left:217px;top:436px;font-size:11px;line-height:13px;color:#fffff8;white-space:nowrap">1'h1</div>
<svg style="position:absolute;left:40px;top:452px" width="15" height="15"><use href="#dia"/></svg>
<svg style="position:absolute;left:39px;top:460px" width="9" height="7"><use href="#arr"/></svg>
<div style="position:absolute;left:59px;top:453px;font-size:11px;line-height:13px;color:#fffff8;white-space:nowrap">end_flag</div>
<div style="position:absolute;left:217px;top:453px;font-size:11px;line-height:13px;color:#fffff8;white-space:nowrap">1'h0</div>
<svg style="position:absolute;left:40px;top:469px" width="15" height="15"><use href="#dia"/></svg>
<svg style="position:absolute;left:39px;top:477px" width="9" height="7"><use href="#arr"/></svg>
<div style="position:absolute;left:59px;top:470px;font-size:11px;line-height:13px;color:#fffff8;white-space:nowrap">start</div>
<div style="position:absolute;left:217px;top:470px;font-size:11px;line-height:13px;color:#fffff8;white-space:nowrap">1'h0</div>
<svg style="position:absolute;left:25px;top:488px" width="11" height="11"><use href="#plus"/></svg>
<div style="position:absolute;left:36px;top:493px;width:5px;height:1px;background:#c8c8c8"></div>
<svg style="position:absolute;left:40px;top:486px" width="15" height="15"><use href="#dia"/></svg>
<svg style="position:absolute;left:47px;top:494px" width="9" height="7"><use href="#arr"/></svg>
<div style="position:absolute;left:59px;top:487px;font-size:11px;line-height:13px;color:#fffff8;white-space:nowrap">reg_cfg</div>
<div style="position:absolute;left:217px;top:487px;font-size:11px;line-height:13px;color:#fffff8;white-space:nowrap">24'h...</div>
<svg style="position:absolute;left:25px;top:505px" width="11" height="11"><use href="#plus"/></svg>
<div style="position:absolute;left:36px;top:510px;width:5px;height:1px;background:#c8c8c8"></div>
<svg style="position:absolute;left:40px;top:503px" width="15" height="15"><use href="#dia"/></svg>
<div style="position:absolute;left:59px;top:504px;font-size:11px;line-height:13px;color:#fffff8;white-space:nowrap">num_cnt</div>
<div style="position:absolute;left:217px;top:504px;font-size:11px;line-height:13px;color:#fffff8;white-space:nowrap">8'h03</div>
<svg style="position:absolute;left:25px;top:522px" width="11" height="11"><use href="#plus"/></svg>
<div style="position:absolute;left:36px;top:527px;width:5px;height:1px;background:#c8c8c8"></div>
<svg style="position:absolute;left:40px;top:520px" width="15" height="15"><use href="#dia"/></svg>
<div style="position:absolute;left:59px;top:521px;font-size:11px;line-height:13px;color:#fffff8;white-space:nowrap">reg_array</div>
<div style="position:absolute;left:217px;top:521px;font-size:11px;line-height:13px;color:#fffff8;white-space:nowrap">24'h...</div>
<div style="position:absolute;left:22px;top:543px;width:18px;height:1px;background:#fff"></div>
<div style="position:absolute;left:44px;top:538px;font-size:11px;line-height:13px;color:#fffff8;white-space:nowrap">iic_inst</div>
<div style="position:absolute;left:85px;top:543px;width:127px;height:1px;background:#fff"></div>
<div style="position:absolute;left:215px;top:543px;width:40px;height:1px;background:#fff"></div>
<svg style="position:absolute;left:40px;top:554px" width="15" height="15"><use href="#dia"/></svg>
<svg style="position:absolute;left:39px;top:562px" width="9" height="7"><use href="#arr"/></svg>
<div style="position:absolute;left:59px;top:555px;font-size:11px;line-height:13px;color:#fffff8;white-space:nowrap">sclk</div>
<div style="position:absolute;left:217px;top:555px;font-size:11px;line-height:13px;color:#fffff8;white-space:nowrap">1'h1</div>
<svg style="position:absolute;left:40px;top:571px" width="15" height="15"><use href="#dia"/></svg>
<svg style="position:absolute;left:39px;top:579px" width="9" height="7"><use href="#arr"/></svg>
<div style="position:absolute;left:59px;top:572px;font-size:11px;line-height:13px;color:#fffff8;white-space:nowrap">s_rst_n</div>
<div style="position:absolute;left:217px;top:572px;font-size:11px;line-height:13px;color:#fffff8;white-space:nowrap">1'h1</div>
<svg style="position:absolute;left:40px;top:588px" width="15" height="15"><use href="#dia"/></svg>
<svg style="position:absolute;left:47px;top:596px" width="9" height="7"><use href="#arr"/></svg>
<div style="position:absolute;left:59px;top:589px;font-size:11px;line-height:13px;color:#fffff8;white-space:nowrap">iic_scl</div>
<div style="position:absolute;left:217px;top:589px;font-size:11px;line-height:13px;color:#fffff8;white-space:nowrap">1'h1</div>
<svg style="position:absolute;left:40px;top:605px" width="15" height="15"><use href="#dia"/></svg>
<svg style="position:absolute;left:47px;top:613px" width="9" height="7"><use href="#arr"/></svg>
<svg style="position:absolute;left:44px;top:613px;transform:scaleX(-1)" width="9" height="7"><use href="#arr"/></svg>
<div style="position:absolute;left:59px;top:606px;font-size:11px;line-height:13px;color:#fffff8;white-space:nowrap">iic_sda</div>
<div style="position:absolute;left:217px;top:606px;font-size:11px;line-height:13px;color:#fffff8;white-space:nowrap">1'h1</div>
<svg style="position:absolute;left:40px;top:622px" width="15" height="15"><use href="#dia"/></svg>
<svg style="position:absolute;left:39px;top:630px" width="9" height="7"><use href="#arr"/></svg>
<div style="position:absolute;left:59px;top:623px;font-size:11px;line-height:13px;color:#fffff8;white-space:nowrap">start</div>
<div style="position:absolute;left:217px;top:623px;font-size:11px;line-height:13px;color:#fffff8;white-space:nowrap">1'h0</div>
<svg style="position:absolute;left:25px;top:641px" width="11" height="11"><use href="#plus"/></svg>
<div style="position:absolute;left:36px;top:646px;width:5px;height:1px;background:#c8c8c8"></div>
<svg style="position:absolute;left:40px;top:639px" width="15" height="15"><use href="#dia"/></svg>
<svg style="position:absolute;left:39px;top:647px" width="9" height="7"><use href="#arr"/></svg>
<div style="position:absolute;left:59px;top:640px;font-size:11px;line-height:13px;color:#fffff8;white-space:nowrap">t_data</div>
<div style="position:absolute;left:217px;top:640px;font-size:11px;line-height:13px;color:#fffff8;white-space:nowrap">24'h...</div>
<svg style="position:absolute;left:25px;top:658px" width="11" height="11"><use href="#plus"/></svg>
<div style="position:absolute;left:36px;top:663px;width:5px;height:1px;background:#c8c8c8"></div>
<svg style="position:absolute;left:40px;top:656px" width="15" height="15"><use href="#dia"/></svg>
<svg style="position:absolute;left:47px;top:664px" width="9" height="7"><use href="#arr"/></svg>
<div style="position:absolute;left:59px;top:657px;font-size:11px;line-height:13px;color:#fffff8;white-space:nowrap">data_o</div>
<div style="position:absolute;left:217px;top:657px;font-size:11px;line-height:13px;color:#fffff8;white-space:nowrap">8'hzz</div>
<svg style="position:absolute;left:40px;top:673px" width="15" height="15"><use href="#dia"/></svg>
<svg style="position:absolute;left:47px;top:681px" width="9" height="7"><use href="#arr"/></svg>
<div style="position:absolute;left:59px;top:674px;font-size:11px;line-height:13px;color:#fffff8;white-space:nowrap">busy</div>
<div style="position:absolute;left:217px;top:674px;font-size:11px;line-height:13px;color:#fffff8;white-space:nowrap">1'h0</div>
<svg style="position:absolute;left:40px;top:690px" width="15" height="15"><use href="#dia"/></svg>
<svg style="position:absolute;left:47px;top:698px" width="9" height="7"><use href="#arr"/></svg>
<div style="position:absolute;left:59px;top:691px;font-size:11px;line-height:13px;color:#fffff8;white-space:nowrap">end_flag</div>
<div style="position:absolute;left:217px;top:691px;font-size:11px;line-height:13px;color:#fffff8;white-space:nowrap">1'h0</div>
<div style="position:absolute;left:20px;top:706px;width:192px;height:17px;background:#fff"></div>
<div style="position:absolute;left:215px;top:706px;width:40px;height:17px;background:#fff"></div>
<svg style="position:absolute;left:25px;top:709px" width="11" height="11"><use href="#plus"/></svg>
<div style="position:absolute;left:36px;top:714px;width:5px;height:1px;background:#c8c8c8"></div>
<svg style="position:absolute;left:40px;top:707px" width="15" height="15"><use href="#dia"/></svg>
<div style="position:absolute;left:59px;top:708px;font-size:11px;line-height:13px;color:#000;white-space:nowrap">cfg_cnt</div>
<div style="position:absolute;left:217px;top:708px;font-size:11px;line-height:13px;color:#000;white-space:nowrap">8'd0</div>
<svg style="position:absolute;left:40px;top:724px" width="15" height="15"><use href="#dia"/></svg>
<div style="position:absolute;left:59px;top:725px;font-size:11px;line-height:13px;color:#fffff8;white-space:nowrap">iic_sda_reg</div>
<div style="position:absolute;left:217px;top:725px;font-size:11px;line-height:13px;color:#fffff8;white-space:nowrap">1'h1</div>
<svg style="position:absolute;left:40px;top:741px" width="15" height="15"><use href="#dia"/></svg>
<div style="position:absolute;left:59px;top:742px;font-size:11px;line-height:13px;color:#fffff8;white-space:nowrap">ack_flag</div>
<div style="position:absolute;left:217px;top:742px;font-size:11px;line-height:13px;color:#fffff8;white-space:nowrap">1'h0</div>
<svg style="position:absolute;left:25px;top:760px" width="11" height="11"><use href="#plus"/></svg>
<div style="position:absolute;left:36px;top:765px;width:5px;height:1px;background:#c8c8c8"></div>
<svg style="position:absolute;left:40px;top:758px" width="15" height="15"><use href="#dia"/></svg>
<div style="position:absolute;left:59px;top:759px;font-size:11px;line-height:13px;color:#fffff8;white-space:nowrap">rec_data</div>
<div style="position:absolute;left:217px;top:759px;font-size:11px;line-height:13px;color:#fffff8;white-space:nowrap">8'hzz</div>
<svg style="position:absolute;left:40px;top:775px" width="15" height="15"><use href="#dia"/></svg>
<div style="position:absolute;left:59px;top:776px;font-size:11px;line-height:13px;color:#fffff8;white-space:nowrap">iic_scl_reg</div>
<div style="position:absolute;left:217px;top:776px;font-size:11px;line-height:13px;color:#fffff8;white-space:nowrap">1'h1</div>
<svg style="position:absolute;left:40px;top:792px" width="15" height="15"><use href="#dia"/></svg>
<div style="position:absolute;left:59px;top:793px;font-size:11px;line-height:13px;color:#fffff8;white-space:nowrap">direc</div>
<div style="position:absolute;left:217px;top:793px;font-size:11px;line-height:13px;color:#fffff8;white-space:nowrap">1'h0</div>
<div style="position:absolute;left:22px;top:815px;width:18px;height:1px;background:#fff"></div>
<div style="position:absolute;left:44px;top:810px;font-size:11px;line-height:13px;color:#fffff8;white-space:nowrap">uart_tx_inst</div>
<div style="position:absolute;left:110px;top:815px;width:102px;height:1px;background:#fff"></div>
<div style="position:absolute;left:215px;top:815px;width:40px;height:1px;background:#fff"></div>
<svg style="position:absolute;left:40px;top:826px" width="15" height="15"><use href="#dia"/></svg>
<svg style="position:absolute;left:39px;top:834px" width="9" height="7"><use href="#arr"/></svg>
<div style="position:absolute;left:59px;top:827px;font-size:11px;line-height:13px;color:#fffff8;white-space:nowrap">sclk</div>
<div style="position:absolute;left:217px;top:827px;font-size:11px;line-height:13px;color:#fffff8;white-space:nowrap">1'h1</div>
<svg style="position:absolute;left:40px;top:843px" width="15" height="15"><use href="#dia"/></svg>
<svg style="position:absolute;left:39px;top:851px" width="9" height="7"><use href="#arr"/></svg>
<div style="position:absolute;left:59px;top:844px;font-size:11px;line-height:13px;color:#fffff8;white-space:nowrap">s_rst_n</div>
<div style="position:absolute;left:217px;top:844px;font-size:11px;line-height:13px;color:#fffff8;white-space:nowrap">1'h1</div>
<svg style="position:absolute;left:40px;top:860px" width="15" height="15"><use href="#dia"/></svg>
<svg style="position:absolute;left:47px;top:868px" width="9" height="7"><use href="#arr"/></svg>
<div style="position:absolute;left:59px;top:861px;font-size:11px;line-height:13px;color:#fffff8;white-space:nowrap">rs232_tx</div>
<div style="position:absolute;left:217px;top:861px;font-size:11px;line-height:13px;color:#fffff8;white-space:nowrap">1'h1</div>
<svg style="position:absolute;left:25px;top:879px" width="11" height="11"><use href="#plus"/></svg>
<div style="position:absolute;left:36px;top:884px;width:5px;height:1px;background:#c8c8c8"></div>
<svg style="position:absolute;left:40px;top:877px" width="15" height="15"><use href="#dia"/></svg>
<svg style="position:absolute;left:39px;top:885px" width="9" height="7"><use href="#arr"/></svg>
<div style="position:absolute;left:59px;top:878px;font-size:11px;line-height:13px;color:#fffff8;white-space:nowrap">tx_data</div>
<div style="position:absolute;left:217px;top:878px;font-size:11px;line-height:13px;color:#fffff8;white-space:nowrap">8'hzz</div>
<svg style="position:absolute;left:40px;top:894px" width="15" height="15"><use href="#dia"/></svg>
<svg style="position:absolute;left:39px;top:902px" width="9" height="7"><use href="#arr"/></svg>
<div style="position:absolute;left:59px;top:895px;font-size:11px;line-height:13px;color:#fffff8;white-space:nowrap">tx_trig</div>
<div style="position:absolute;left:217px;top:895px;font-size:11px;line-height:13px;color:#fffff8;white-space:nowrap">1'h0</div>
<svg style="position:absolute;left:25px;top:913px" width="11" height="11"><use href="#plus"/></svg>
<div style="position:absolute;left:36px;top:918px;width:5px;height:1px;background:#c8c8c8"></div>
<svg style="position:absolute;left:40px;top:911px" width="15" height="15"><use href="#dia"/></svg>
<div style="position:absolute;left:59px;top:912px;font-size:11px;line-height:13px;color:#fffff8;white-space:nowrap">tx_data_r</div>
<div style="position:absolute;left:217px;top:912px;font-size:11px;line-height:13px;color:#fffff8;white-space:nowrap">8'hzz</div>
<svg style="position:absolute;left:40px;top:928px" width="15" height="15"><use href="#dia"/></svg>
<div style="position:absolute;left:59px;top:929px;font-size:11px;line-height:13px;color:#fffff8;white-space:nowrap">tx_flag</div>
<div style="position:absolute;left:217px;top:929px;font-size:11px;line-height:13px;color:#fffff8;white-space:nowrap">1'h1</div>
<svg style="position:absolute;left:25px;top:947px" width="11" height="11"><use href="#plus"/></svg>
<div style="position:absolute;left:36px;top:952px;width:5px;height:1px;background:#c8c8c8"></div>
<svg style="position:absolute;left:40px;top:945px" width="15" height="15"><use href="#dia"/></svg>
<div style="position:absolute;left:59px;top:946px;font-size:11px;line-height:13px;color:#fffff8;white-space:nowrap">baud_cnt</div>
<div style="position:absolute;left:217px;top:946px;font-size:11px;line-height:13px;color:#fffff8;white-space:nowrap">13'h...</div>
<svg width="1936" height="1056" style="position:absolute;left:0;top:0" shape-rendering="crispEdges">
<g fill="none" stroke-width="1">
<path d="M290.5 160V961M349.5 160V961M407.5 160V961M466.5 160V961M524.5 160V961M583.5 160V961M641.5 160V961M700.5 160V961M759.5 160V961M817.5 160V961M876.5 160V961M934.5 160V961M993.5 160V961M1051.5 160V961M1110.5 160V961M1168.5 160V961M1227.5 160V961M1285.5 160V961M1344.5 160V961M1402.5 160V961M1461.5 160V961M1520.5 160V961M1578.5 160V961M1637.5 160V961M1695.5 160V961M1754.5 160V961M1812.5 160V961M1871.5 160V961" stroke="#808080"/>
<rect x="261" y="199" width="1640" height="12" fill="#3cff1e"/>
<rect x="262" y="283" width="1639" height="6" fill="#b4ffb4"/>
<rect x="262" y="290" width="1639" height="6" fill="#b4ffb4"/>
<rect x="261" y="828" width="1640" height="12" fill="#3cff1e"/>
<rect x="1672" y="946" width="229" height="6" fill="#b4ffb4"/>
<rect x="1672" y="953" width="229" height="6" fill="#b4ffb4"/>
<path d="M261.5 164.5H1900.5M261.5 215.5H1900.5M261.5 232.5H510.5M510.5 244.5H525.5M510.5 232.5V244.5M525.5 232.5H540.5M525.5 244.5V232.5M540.5 244.5H555.5M540.5 232.5V244.5M555.5 232.5H570.5M555.5 244.5V232.5M570.5 244.5H585.5M570.5 232.5V244.5M585.5 232.5H600.5M585.5 244.5V232.5M600.5 244.5H615.5M600.5 232.5V244.5M615.5 232.5H630.5M615.5 244.5V232.5M630.5 244.5H645.5M630.5 232.5V244.5M645.5 232.5H660.5M645.5 244.5V232.5M660.5 244.5H675.5M660.5 232.5V244.5M675.5 232.5H690.5M675.5 244.5V232.5M690.5 244.5H705.5M690.5 232.5V244.5M705.5 232.5H720.5M705.5 244.5V232.5M720.5 244.5H735.5M720.5 232.5V244.5M735.5 232.5H750.5M735.5 244.5V232.5M750.5 244.5H765.5M750.5 232.5V244.5M765.5 232.5H780.5M765.5 244.5V232.5M780.5 244.5H795.5M780.5 232.5V244.5M795.5 232.5H810.5M795.5 244.5V232.5M810.5 244.5H825.5M810.5 232.5V244.5M825.5 232.5H840.5M825.5 244.5V232.5M840.5 244.5H855.5M840.5 232.5V244.5M855.5 232.5H870.5M855.5 244.5V232.5M870.5 244.5H885.5M870.5 232.5V244.5M885.5 232.5H900.5M885.5 244.5V232.5M900.5 244.5H915.5M900.5 232.5V244.5M915.5 232.5H930.5M915.5 244.5V232.5M930.5 244.5H945.5M930.5 232.5V244.5M945.5 232.5H959.5M945.5 244.5V232.5M959.5 244.5H974.5M959.5 232.5V244.5M974.5 232.5H989.5M974.5 244.5V232.5M989.5 244.5H1004.5M989.5 232.5V244.5M1004.5 232.5H1019.5M1004.5 244.5V232.5M1019.5 244.5H1034.5M1019.5 232.5V244.5M1034.5 232.5H1049.5M1034.5 244.5V232.5M1049.5 244.5H1057.5M1049.5 232.5V244.5M1057.5 232.5H1116.5M1057.5 244.5V232.5M1116.5 244.5H1124.5M1116.5 232.5V244.5M1124.5 232.5H1139.5M1124.5 244.5V232.5M1139.5 244.5H1154.5M1139.5 232.5V244.5M1154.5 232.5H1169.5M1154.5 244.5V232.5M1169.5 244.5H1184.5M1169.5 232.5V244.5M1184.5 232.5H1199.5M1184.5 244.5V232.5M1199.5 244.5H1214.5M1199.5 232.5V244.5M1214.5 232.5H1229.5M1214.5 244.5V232.5M1229.5 244.5H1244.5M1229.5 232.5V244.5M1244.5 232.5H1259.5M1244.5 244.5V232.5M1259.5 244.5H1274.5M1259.5 232.5V244.5M1274.5 232.5H1289.5M1274.5 244.5V232.5M1289.5 244.5H1304.5M1289.5 232.5V244.5M1304.5 232.5H1319.5M1304.5 244.5V232.5M1319.5 244.5H1334.5M1319.5 232.5V244.5M1334.5 232.5H1349.5M1334.5 244.5V232.5M1349.5 244.5H1364.5M1349.5 232.5V244.5M1364.5 232.5H1379.5M1364.5 244.5V232.5M1379.5 244.5H1394.5M1379.5 232.5V244.5M1394.5 232.5H1409.5M1394.5 244.5V232.5M1409.5 244.5H1424.5M1409.5 232.5V244.5M1424.5 232.5H1439.5M1424.5 244.5V232.5M1439.5 244.5H1454.5M1439.5 232.5V244.5M1454.5 232.5H1469.5M1454.5 244.5V232.5M1469.5 244.5H1484.5M1469.5 232.5V244.5M1484.5 232.5H1499.5M1484.5 244.5V232.5M1499.5 244.5H1514.5M1499.5 232.5V244.5M1514.5 232.5H1529.5M1514.5 244.5V232.5M1529.5 244.5H1544.5M1529.5 232.5V244.5M1544.5 232.5H1559.5M1544.5 244.5V232.5M1559.5 244.5H1574.5M1559.5 232.5V244.5M1574.5 232.5H1589.5M1574.5 244.5V232.5M1589.5 244.5H1604.5M1589.5 232.5V244.5M1604.5 232.5H1619.5M1604.5 244.5V232.5M1619.5 244.5H1634.5M1619.5 232.5V244.5M1634.5 232.5H1649.5M1634.5 244.5V232.5M1649.5 244.5H1664.5M1649.5 232.5V244.5M1664.5 232.5H1900.5M1664.5 244.5V232.5M261.5 249.5H495.5M495.5 261.5H517.5M495.5 249.5V261.5M517.5 249.5H577.5M517.5 261.5V249.5M577.5 261.5H607.5M577.5 249.5V261.5M607.5 249.5H637.5M607.5 261.5V249.5M637.5 261.5H757.5M637.5 249.5V261.5M787.5 261.5H817.5M787.5 255.5V261.5M817.5 249.5H847.5M817.5 261.5V249.5M847.5 261.5H907.5M847.5 249.5V261.5M907.5 249.5H937.5M907.5 261.5V249.5M937.5 261.5H967.5M937.5 249.5V261.5M967.5 249.5H1027.5M967.5 261.5V249.5M1057.5 249.5H1087.5M1057.5 255.5V249.5M1087.5 261.5H1327.5M1087.5 249.5V261.5M1327.5 249.5H1356.5M1327.5 261.5V249.5M1626.5 249.5H1656.5M1626.5 255.5V249.5M1656.5 261.5H1686.5M1656.5 249.5V261.5M1686.5 249.5H1900.5M1686.5 261.5V249.5M261.5 266.5H1671.5M1671.5 278.5H1722.5M1671.5 266.5V278.5M261.5 317.5H263.5M263.5 329.5H270.5M263.5 317.5V329.5M270.5 317.5H278.5M270.5 329.5V317.5M278.5 329.5H285.5M278.5 317.5V329.5M285.5 317.5H293.5M285.5 329.5V317.5M293.5 329.5H300.5M293.5 317.5V329.5M300.5 317.5H308.5M300.5 329.5V317.5M308.5 329.5H315.5M308.5 317.5V329.5M315.5 317.5H323.5M315.5 329.5V317.5M323.5 329.5H330.5M323.5 317.5V329.5M330.5 317.5H338.5M330.5 329.5V317.5M338.5 329.5H345.5M338.5 317.5V329.5M345.5 317.5H353.5M345.5 329.5V317.5M353.5 329.5H360.5M353.5 317.5V329.5M360.5 317.5H368.5M360.5 329.5V317.5M368.5 329.5H375.5M368.5 317.5V329.5M375.5 317.5H383.5M375.5 329.5V317.5M383.5 329.5H390.5M383.5 317.5V329.5M390.5 317.5H398.5M390.5 329.5V317.5M398.5 329.5H405.5M398.5 317.5V329.5M405.5 317.5H413.5M405.5 329.5V317.5M413.5 329.5H420.5M413.5 317.5V329.5M420.5 317.5H428.5M420.5 329.5V317.5M428.5 329.5H435.5M428.5 317.5V329.5M435.5 317.5H443.5M435.5 329.5V317.5M443.5 329.5H450.5M443.5 317.5V329.5M450.5 317.5H458.5M450.5 329.5V317.5M458.5 329.5H465.5M458.5 317.5V329.5M465.5 317.5H473.5M465.5 329.5V317.5M473.5 329.5H480.5M473.5 317.5V329.5M480.5 317.5H488.5M480.5 329.5V317.5M488.5 329.5H495.5M488.5 317.5V329.5M495.5 317.5H503.5M495.5 329.5V317.5M503.5 329.5H510.5M503.5 317.5V329.5M510.5 317.5H518.5M510.5 329.5V317.5M518.5 329.5H525.5M518.5 317.5V329.5M525.5 317.5H533.5M525.5 329.5V317.5M533.5 329.5H540.5M533.5 317.5V329.5M540.5 317.5H548.5M540.5 329.5V317.5M548.5 329.5H555.5M548.5 317.5V329.5M555.5 317.5H563.5M555.5 329.5V317.5M563.5 329.5H570.5M563.5 317.5V329.5M570.5 317.5H578.5M570.5 329.5V317.5M578.5 329.5H585.5M578.5 317.5V329.5M585.5 317.5H593.5M585.5 329.5V317.5M593.5 329.5H600.5M593.5 317.5V329.5M600.5 317.5H608.5M600.5 329.5V317.5M608.5 329.5H615.5M608.5 317.5V329.5M615.5 317.5H623.5M615.5 329.5V317.5M623.5 329.5H630.5M623.5 317.5V329.5M630.5 317.5H638.5M630.5 329.5V317.5M638.5 329.5H645.5M638.5 317.5V329.5M645.5 317.5H653.5M645.5 329.5V317.5M653.5 329.5H660.5M653.5 317.5V329.5M660.5 317.5H668.5M660.5 329.5V317.5M668.5 329.5H675.5M668.5 317.5V329.5M675.5 317.5H683.5M675.5 329.5V317.5M683.5 329.5H690.5M683.5 317.5V329.5M690.5 317.5H698.5M690.5 329.5V317.5M698.5 329.5H705.5M698.5 317.5V329.5M705.5 317.5H713.5M705.5 329.5V317.5M713.5 329.5H720.5M713.5 317.5V329.5M720.5 317.5H728.5M720.5 329.5V317.5M728.5 329.5H735.5M728.5 317.5V329.5M735.5 317.5H743.5M735.5 329.5V317.5M743.5 329.5H750.5M743.5 317.5V329.5M750.5 317.5H758.5M750.5 329.5V317.5M758.5 329.5H765.5M758.5 317.5V329.5M765.5 317.5H773.5M765.5 329.5V317.5M773.5 329.5H780.5M773.5 317.5V329.5M780.5 317.5H788.5M780.5 329.5V317.5M788.5 329.5H795.5M788.5 317.5V329.5M795.5 317.5H803.5M795.5 329.5V317.5M803.5 329.5H810.5M803.5 317.5V329.5M810.5 317.5H818.5M810.5 329.5V317.5M818.5 329.5H825.5M818.5 317.5V329.5M825.5 317.5H833.5M825.5 329.5V317.5M833.5 329.5H840.5M833.5 317.5V329.5M840.5 317.5H848.5M840.5 329.5V317.5M848.5 329.5H854.5M848.5 317.5V329.5M854.5 317.5H862.5M854.5 329.5V317.5M862.5 329.5H869.5M862.5 317.5V329.5M869.5 317.5H877.5M869.5 329.5V317.5M877.5 329.5H884.5M877.5 317.5V329.5M884.5 317.5H892.5M884.5 329.5V317.5M892.5 329.5H899.5M892.5 317.5V329.5M899.5 317.5H907.5M899.5 329.5V317.5M907.5 329.5H914.5M907.5 317.5V329.5M914.5 317.5H922.5M914.5 329.5V317.5M922.5 329.5H929.5M922.5 317.5V329.5M929.5 317.5H937.5M929.5 329.5V317.5M937.5 329.5H944.5M937.5 317.5V329.5M944.5 317.5H952.5M944.5 329.5V317.5M952.5 329.5H959.5M952.5 317.5V329.5M959.5 317.5H967.5M959.5 329.5V317.5M967.5 329.5H974.5M967.5 317.5V329.5M974.5 317.5H982.5M974.5 329.5V317.5M982.5 329.5H989.5M982.5 317.5V329.5M989.5 317.5H997.5M989.5 329.5V317.5M997.5 329.5H1004.5M997.5 317.5V329.5M1004.5 317.5H1012.5M1004.5 329.5V317.5M1012.5 329.5H1019.5M1012.5 317.5V329.5M1019.5 317.5H1027.5M1019.5 329.5V317.5M1027.5 329.5H1034.5M1027.5 317.5V329.5M1034.5 317.5H1042.5M1034.5 329.5V317.5M1042.5 329.5H1049.5M1042.5 317.5V329.5M1049.5 317.5H1057.5M1049.5 329.5V317.5M1057.5 329.5H1064.5M1057.5 317.5V329.5M1064.5 317.5H1072.5M1064.5 329.5V317.5M1072.5 329.5H1079.5M1072.5 317.5V329.5M1079.5 317.5H1087.5M1079.5 329.5V317.5M1087.5 329.5H1094.5M1087.5 317.5V329.5M1094.5 317.5H1102.5M1094.5 329.5V317.5M1102.5 329.5H1109.5M1102.5 317.5V329.5M1109.5 317.5H1117.5M1109.5 329.5V317.5M1117.5 329.5H1124.5M1117.5 317.5V329.5M1124.5 317.5H1132.5M1124.5 329.5V317.5M1132.5 329.5H1139.5M1132.5 317.5V329.5M1139.5 317.5H1147.5M1139.5 329.5V317.5M1147.5 329.5H1154.5M1147.5 317.5V329.5M1154.5 317.5H1162.5M1154.5 329.5V317.5M1162.5 329.5H1169.5M1162.5 317.5V329.5M1169.5 317.5H1177.5M1169.5 329.5V317.5M1177.5 329.5H1184.5M1177.5 317.5V329.5M1184.5 317.5H1192.5M1184.5 329.5V317.5M1192.5 329.5H1199.5M1192.5 317.5V329.5M1199.5 317.5H1207.5M1199.5 329.5V317.5M1207.5 329.5H1214.5M1207.5 317.5V329.5M1214.5 317.5H1222.5M1214.5 329.5V317.5M1222.5 329.5H1229.5M1222.5 317.5V329.5M1229.5 317.5H1237.5M1229.5 329.5V317.5M1237.5 329.5H1244.5M1237.5 317.5V329.5M1244.5 317.5H1252.5M1244.5 329.5V317.5M1252.5 329.5H1259.5M1252.5 317.5V329.5M1259.5 317.5H1267.5M1259.5 329.5V317.5M1267.5 329.5H1274.5M1267.5 317.5V329.5M1274.5 317.5H1282.5M1274.5 329.5V317.5M1282.5 329.5H1289.5M1282.5 317.5V329.5M1289.5 317.5H1297.5M1289.5 329.5V317.5M1297.5 329.5H1304.5M1297.5 317.5V329.5M1304.5 317.5H1312.5M1304.5 329.5V317.5M1312.5 329.5H1319.5M1312.5 317.5V329.5M1319.5 317.5H1327.5M1319.5 329.5V317.5M1327.5 329.5H1334.5M1327.5 317.5V329.5M1334.5 317.5H1342.5M1334.5 329.5V317.5M1342.5 329.5H1349.5M1342.5 317.5V329.5M1349.5 317.5H1357.5M1349.5 329.5V317.5M1357.5 329.5H1364.5M1357.5 317.5V329.5M1364.5 317.5H1372.5M1364.5 329.5V317.5M1372.5 329.5H1379.5M1372.5 317.5V329.5M1379.5 317.5H1387.5M1379.5 329.5V317.5M1387.5 329.5H1394.5M1387.5 317.5V329.5M1394.5 317.5H1402.5M1394.5 329.5V317.5M1402.5 329.5H1409.5M1402.5 317.5V329.5M1409.5 317.5H1417.5M1409.5 329.5V317.5M1417.5 329.5H1424.5M1417.5 317.5V329.5M1424.5 317.5H1432.5M1424.5 329.5V317.5M1432.5 329.5H1439.5M1432.5 317.5V329.5M1439.5 317.5H1447.5M1439.5 329.5V317.5M1447.5 329.5H1454.5M1447.5 317.5V329.5M1454.5 317.5H1462.5M1454.5 329.5V317.5M1462.5 329.5H1469.5M1462.5 317.5V329.5M1469.5 317.5H1477.5M1469.5 329.5V317.5M1477.5 329.5H1484.5M1477.5 317.5V329.5M1484.5 317.5H1492.5M1484.5 329.5V317.5M1492.5 329.5H1499.5M1492.5 317.5V329.5M1499.5 317.5H1507.5M1499.5 329.5V317.5M1507.5 329.5H1514.5M1507.5 317.5V329.5M1514.5 317.5H1522.5M1514.5 329.5V317.5M1522.5 329.5H1529.5M1522.5 317.5V329.5M1529.5 317.5H1537.5M1529.5 329.5V317.5M1537.5 329.5H1544.5M1537.5 317.5V329.5M1544.5 317.5H1552.5M1544.5 329.5V317.5M1552.5 329.5H1559.5M1552.5 317.5V329.5M1559.5 317.5H1567.5M1559.5 329.5V317.5M1567.5 329.5H1574.5M1567.5 317.5V329.5M1574.5 317.5H1582.5M1574.5 329.5V317.5M1582.5 329.5H1589.5M1582.5 317.5V329.5M1589.5 317.5H1597.5M1589.5 329.5V317.5M1597.5 329.5H1604.5M1597.5 317.5V329.5M1604.5 317.5H1612.5M1604.5 329.5V317.5M1612.5 329.5H1619.5M1612.5 317.5V329.5M1619.5 317.5H1627.5M1619.5 329.5V317.5M1627.5 329.5H1634.5M1627.5 317.5V329.5M1634.5 317.5H1642.5M1634.5 329.5V317.5M1642.5 329.5H1649.5M1642.5 317.5V329.5M1649.5 317.5H1657.5M1649.5 329.5V317.5M1657.5 329.5H1664.5M1657.5 317.5V329.5M1664.5 317.5H1672.5M1664.5 329.5V317.5M1672.5 329.5H1679.5M1672.5 317.5V329.5M1679.5 317.5H1687.5M1679.5 329.5V317.5M1687.5 329.5H1694.5M1687.5 317.5V329.5M1694.5 317.5H1702.5M1694.5 329.5V317.5M1702.5 329.5H1709.5M1702.5 317.5V329.5M1709.5 317.5H1717.5M1709.5 329.5V317.5M1717.5 329.5H1724.5M1717.5 317.5V329.5M1724.5 317.5H1732.5M1724.5 329.5V317.5M1732.5 329.5H1738.5M1732.5 317.5V329.5M1738.5 317.5H1746.5M1738.5 329.5V317.5M1746.5 329.5H1753.5M1746.5 317.5V329.5M1753.5 317.5H1761.5M1753.5 329.5V317.5M1761.5 329.5H1768.5M1761.5 317.5V329.5M1768.5 317.5H1776.5M1768.5 329.5V317.5M1776.5 329.5H1783.5M1776.5 317.5V329.5M1783.5 317.5H1791.5M1783.5 329.5V317.5M1791.5 329.5H1798.5M1791.5 317.5V329.5M1798.5 317.5H1806.5M1798.5 329.5V317.5M1806.5 329.5H1813.5M1806.5 317.5V329.5M1813.5 317.5H1821.5M1813.5 329.5V317.5M1821.5 329.5H1828.5M1821.5 317.5V329.5M1828.5 317.5H1836.5M1828.5 329.5V317.5M1836.5 329.5H1843.5M1836.5 317.5V329.5M1843.5 317.5H1851.5M1843.5 329.5V317.5M1851.5 329.5H1858.5M1851.5 317.5V329.5M1858.5 317.5H1866.5M1858.5 329.5V317.5M1866.5 329.5H1873.5M1866.5 317.5V329.5M1873.5 317.5H1881.5M1873.5 329.5V317.5M1881.5 329.5H1888.5M1881.5 317.5V329.5M1888.5 317.5H1896.5M1888.5 329.5V317.5M1896.5 329.5H1900.5M1896.5 317.5V329.5M261.5 346.5H480.5M480.5 334.5H495.5M480.5 346.5V334.5M495.5 346.5H1900.5M495.5 334.5V346.5M261.5 397.5H1671.5M1671.5 385.5H1701.5M1671.5 397.5V385.5M1701.5 397.5H1900.5M1701.5 385.5V397.5M261.5 419.5H263.5M263.5 431.5H270.5M263.5 419.5V431.5M270.5 419.5H278.5M270.5 431.5V419.5M278.5 431.5H285.5M278.5 419.5V431.5M285.5 419.5H293.5M285.5 431.5V419.5M293.5 431.5H300.5M293.5 419.5V431.5M300.5 419.5H308.5M300.5 431.5V419.5M308.5 431.5H315.5M308.5 419.5V431.5M315.5 419.5H323.5M315.5 431.5V419.5M323.5 431.5H330.5M323.5 419.5V431.5M330.5 419.5H338.5M330.5 431.5V419.5M338.5 431.5H345.5M338.5 419.5V431.5M345.5 419.5H353.5M345.5 431.5V419.5M353.5 431.5H360.5M353.5 419.5V431.5M360.5 419.5H368.5M360.5 431.5V419.5M368.5 431.5H375.5M368.5 419.5V431.5M375.5 419.5H383.5M375.5 431.5V419.5M383.5 431.5H390.5M383.5 419.5V431.5M390.5 419.5H398.5M390.5 431.5V419.5M398.5 431.5H405.5M398.5 419.5V431.5M405.5 419.5H413.5M405.5 431.5V419.5M413.5 431.5H420.5M413.5 419.5V431.5M420.5 419.5H428.5M420.5 431.5V419.5M428.5 431.5H435.5M428.5 419.5V431.5M435.5 419.5H443.5M435.5 431.5V419.5M443.5 431.5H450.5M443.5 419.5V431.5M450.5 419.5H458.5M450.5 431.5V419.5M458.5 431.5H465.5M458.5 419.5V431.5M465.5 419.5H473.5M465.5 431.5V419.5M473.5 431.5H480.5M473.5 419.5V431.5M480.5 419.5H488.5M480.5 431.5V419.5M488.5 431.5H495.5M488.5 419.5V431.5M495.5 419.5H503.5M495.5 431.5V419.5M503.5 431.5H510.5M503.5 419.5V431.5M510.5 419.5H518.5M510.5 431.5V419.5M518.5 431.5H525.5M518.5 419.5V431.5M525.5 419.5H533.5M525.5 431.5V419.5M533.5 431.5H540.5M533.5 419.5V431.5M540.5 419.5H548.5M540.5 431.5V419.5M548.5 431.5H555.5M548.5 419.5V431.5M555.5 419.5H563.5M555.5 431.5V419.5M563.5 431.5H570.5M563.5 419.5V431.5M570.5 419.5H578.5M570.5 431.5V419.5M578.5 431.5H585.5M578.5 419.5V431.5M585.5 419.5H593.5M585.5 431.5V419.5M593.5 431.5H600.5M593.5 419.5V431.5M600.5 419.5H608.5M600.5 431.5V419.5M608.5 431.5H615.5M608.5 419.5V431.5M615.5 419.5H623.5M615.5 431.5V419.5M623.5 431.5H630.5M623.5 419.5V431.5M630.5 419.5H638.5M630.5 431.5V419.5M638.5 431.5H645.5M638.5 419.5V431.5M645.5 419.5H653.5M645.5 431.5V419.5M653.5 431.5H660.5M653.5 419.5V431.5M660.5 419.5H668.5M660.5 431.5V419.5M668.5 431.5H675.5M668.5 419.5V431.5M675.5 419.5H683.5M675.5 431.5V419.5M683.5 431.5H690.5M683.5 419.5V431.5M690.5 419.5H698.5M690.5 431.5V419.5M698.5 431.5H705.5M698.5 419.5V431.5M705.5 419.5H713.5M705.5 431.5V419.5M713.5 431.5H720.5M713.5 419.5V431.5M720.5 419.5H728.5M720.5 431.5V419.5M728.5 431.5H735.5M728.5 419.5V431.5M735.5 419.5H743.5M735.5 431.5V419.5M743.5 431.5H750.5M743.5 419.5V431.5M750.5 419.5H758.5M750.5 431.5V419.5M758.5 431.5H765.5M758.5 419.5V431.5M765.5 419.5H773.5M765.5 431.5V419.5M773.5 431.5H780.5M773.5 419.5V431.5M780.5 419.5H788.5M780.5 431.5V419.5M788.5 431.5H795.5M788.5 419.5V431.5M795.5 419.5H803.5M795.5 431.5V419.5M803.5 431.5H810.5M803.5 419.5V431.5M810.5 419.5H818.5M810.5 431.5V419.5M818.5 431.5H825.5M818.5 419.5V431.5M825.5 419.5H833.5M825.5 431.5V419.5M833.5 431.5H840.5M833.5 419.5V431.5M840.5 419.5H848.5M840.5 431.5V419.5M848.5 431.5H854.5M848.5 419.5V431.5M854.5 419.5H862.5M854.5 431.5V419.5M862.5 431.5H869.5M862.5 419.5V431.5M869.5 419.5H877.5M869.5 431.5V419.5M877.5 431.5H884.5M877.5 419.5V431.5M884.5 419.5H892.5M884.5 431.5V419.5M892.5 431.5H899.5M892.5 419.5V431.5M899.5 419.5H907.5M899.5 431.5V419.5M907.5 431.5H914.5M907.5 419.5V431.5M914.5 419.5H922.5M914.5 431.5V419.5M922.5 431.5H929.5M922.5 419.5V431.5M929.5 419.5H937.5M929.5 431.5V419.5M937.5 431.5H944.5M937.5 419.5V431.5M944.5 419.5H952.5M944.5 431.5V419.5M952.5 431.5H959.5M952.5 419.5V431.5M959.5 419.5H967.5M959.5 431.5V419.5M967.5 431.5H974.5M967.5 419.5V431.5M974.5 419.5H982.5M974.5 431.5V419.5M982.5 431.5H989.5M982.5 419.5V431.5M989.5 419.5H997.5M989.5 431.5V419.5M997.5 431.5H1004.5M997.5 419.5V431.5M1004.5 419.5H1012.5M1004.5 431.5V419.5M1012.5 431.5H1019.5M1012.5 419.5V431.5M1019.5 419.5H1027.5M1019.5 431.5V419.5M1027.5 431.5H1034.5M1027.5 419.5V431.5M1034.5 419.5H1042.5M1034.5 431.5V419.5M1042.5 431.5H1049.5M1042.5 419.5V431.5M1049.5 419.5H1057.5M1049.5 431.5V419.5M1057.5 431.5H1064.5M1057.5 419.5V431.5M1064.5 419.5H1072.5M1064.5 431.5V419.5M1072.5 431.5H1079.5M1072.5 419.5V431.5M1079.5 419.5H1087.5M1079.5 431.5V419.5M1087.5 431.5H1094.5M1087.5 419.5V431.5M1094.5 419.5H1102.5M1094.5 431.5V419.5M1102.5 431.5H1109.5M1102.5 419.5V431.5M1109.5 419.5H1117.5M1109.5 431.5V419.5M1117.5 431.5H1124.5M1117.5 419.5V431.5M1124.5 419.5H1132.5M1124.5 431.5V419.5M1132.5 431.5H1139.5M1132.5 419.5V431.5M1139.5 419.5H1147.5M1139.5 431.5V419.5M1147.5 431.5H1154.5M1147.5 419.5V431.5M1154.5 419.5H1162.5M1154.5 431.5V419.5M1162.5 431.5H1169.5M1162.5 419.5V431.5M1169.5 419.5H1177.5M1169.5 431.5V419.5M1177.5 431.5H1184.5M1177.5 419.5V431.5M1184.5 419.5H1192.5M1184.5 431.5V419.5M1192.5 431.5H1199.5M1192.5 419.5V431.5M1199.5 419.5H1207.5M1199.5 431.5V419.5M1207.5 431.5H1214.5M1207.5 419.5V431.5M1214.5 419.5H1222.5M1214.5 431.5V419.5M1222.5 431.5H1229.5M1222.5 419.5V431.5M1229.5 419.5H1237.5M1229.5 431.5V419.5M1237.5 431.5H1244.5M1237.5 419.5V431.5M1244.5 419.5H1252.5M1244.5 431.5V419.5M1252.5 431.5H1259.5M1252.5 419.5V431.5M1259.5 419.5H1267.5M1259.5 431.5V419.5M1267.5 431.5H1274.5M1267.5 419.5V431.5M1274.5 419.5H1282.5M1274.5 431.5V419.5M1282.5 431.5H1289.5M1282.5 419.5V431.5M1289.5 419.5H1297.5M1289.5 431.5V419.5M1297.5 431.5H1304.5M1297.5 419.5V431.5M1304.5 419.5H1312.5M1304.5 431.5V419.5M1312.5 431.5H1319.5M1312.5 419.5V431.5M1319.5 419.5H1327.5M1319.5 431.5V419.5M1327.5 431.5H1334.5M1327.5 419.5V431.5M1334.5 419.5H1342.5M1334.5 431.5V419.5M1342.5 431.5H1349.5M1342.5 419.5V431.5M1349.5 419.5H1357.5M1349.5 431.5V419.5M1357.5 431.5H1364.5M1357.5 419.5V431.5M1364.5 419.5H1372.5M1364.5 431.5V419.5M1372.5 431.5H1379.5M1372.5 419.5V431.5M1379.5 419.5H1387.5M1379.5 431.5V419.5M1387.5 431.5H1394.5M1387.5 419.5V431.5M1394.5 419.5H1402.5M1394.5 431.5V419.5M1402.5 431.5H1409.5M1402.5 419.5V431.5M1409.5 419.5H1417.5M1409.5 431.5V419.5M1417.5 431.5H1424.5M1417.5 419.5V431.5M1424.5 419.5H1432.5M1424.5 431.5V419.5M1432.5 431.5H1439.5M1432.5 419.5V431.5M1439.5 419.5H1447.5M1439.5 431.5V419.5M1447.5 431.5H1454.5M1447.5 419.5V431.5M1454.5 419.5H1462.5M1454.5 431.5V419.5M1462.5 431.5H1469.5M1462.5 419.5V431.5M1469.5 419.5H1477.5M1469.5 431.5V419.5M1477.5 431.5H1484.5M1477.5 419.5V431.5M1484.5 419.5H1492.5M1484.5 431.5V419.5M1492.5 431.5H1499.5M1492.5 419.5V431.5M1499.5 419.5H1507.5M1499.5 431.5V419.5M1507.5 431.5H1514.5M1507.5 419.5V431.5M1514.5 419.5H1522.5M1514.5 431.5V419.5M1522.5 431.5H1529.5M1522.5 419.5V431.5M1529.5 419.5H1537.5M1529.5 431.5V419.5M1537.5 431.5H1544.5M1537.5 419.5V431.5M1544.5 419.5H1552.5M1544.5 431.5V419.5M1552.5 431.5H1559.5M1552.5 419.5V431.5M1559.5 419.5H1567.5M1559.5 431.5V419.5M1567.5 431.5H1574.5M1567.5 419.5V431.5M1574.5 419.5H1582.5M1574.5 431.5V419.5M1582.5 431.5H1589.5M1582.5 419.5V431.5M1589.5 419.5H1597.5M1589.5 431.5V419.5M1597.5 431.5H1604.5M1597.5 419.5V431.5M1604.5 419.5H1612.5M1604.5 431.5V419.5M1612.5 431.5H1619.5M1612.5 419.5V431.5M1619.5 419.5H1627.5M1619.5 431.5V419.5M1627.5 431.5H1634.5M1627.5 419.5V431.5M1634.5 419.5H1642.5M1634.5 431.5V419.5M1642.5 431.5H1649.5M1642.5 419.5V431.5M1649.5 419.5H1657.5M1649.5 431.5V419.5M1657.5 431.5H1664.5M1657.5 419.5V431.5M1664.5 419.5H1672.5M1664.5 431.5V419.5M1672.5 431.5H1679.5M1672.5 419.5V431.5M1679.5 419.5H1687.5M1679.5 431.5V419.5M1687.5 431.5H1694.5M1687.5 419.5V431.5M1694.5 419.5H1702.5M1694.5 431.5V419.5M1702.5 431.5H1709.5M1702.5 419.5V431.5M1709.5 419.5H1717.5M1709.5 431.5V419.5M1717.5 431.5H1724.5M1717.5 419.5V431.5M1724.5 419.5H1732.5M1724.5 431.5V419.5M1732.5 431.5H1738.5M1732.5 419.5V431.5M1738.5 419.5H1746.5M1738.5 431.5V419.5M1746.5 431.5H1753.5M1746.5 419.5V431.5M1753.5 419.5H1761.5M1753.5 431.5V419.5M1761.5 431.5H1768.5M1761.5 419.5V431.5M1768.5 419.5H1776.5M1768.5 431.5V419.5M1776.5 431.5H1783.5M1776.5 419.5V431.5M1783.5 419.5H1791.5M1783.5 431.5V419.5M1791.5 431.5H1798.5M1791.5 419.5V431.5M1798.5 419.5H1806.5M1798.5 431.5V419.5M1806.5 431.5H1813.5M1806.5 419.5V431.5M1813.5 419.5H1821.5M1813.5 431.5V419.5M1821.5 431.5H1828.5M1821.5 419.5V431.5M1828.5 419.5H1836.5M1828.5 431.5V419.5M1836.5 431.5H1843.5M1836.5 419.5V431.5M1843.5 419.5H1851.5M1843.5 431.5V419.5M1851.5 431.5H1858.5M1851.5 419.5V431.5M1858.5 419.5H1866.5M1858.5 431.5V419.5M1866.5 431.5H1873.5M1866.5 419.5V431.5M1873.5 419.5H1881.5M1873.5 431.5V419.5M1881.5 431.5H1888.5M1881.5 419.5V431.5M1888.5 419.5H1896.5M1888.5 431.5V419.5M1896.5 431.5H1900.5M1896.5 419.5V431.5M261.5 436.5H1900.5M261.5 465.5H1671.5M1671.5 453.5H1701.5M1671.5 465.5V453.5M1701.5 465.5H1900.5M1701.5 453.5V465.5M261.5 482.5H480.5M480.5 470.5H495.5M480.5 482.5V470.5M495.5 482.5H1900.5M495.5 470.5V482.5M261.5 555.5H263.5M263.5 567.5H270.5M263.5 555.5V567.5M270.5 555.5H278.5M270.5 567.5V555.5M278.5 567.5H285.5M278.5 555.5V567.5M285.5 555.5H293.5M285.5 567.5V555.5M293.5 567.5H300.5M293.5 555.5V567.5M300.5 555.5H308.5M300.5 567.5V555.5M308.5 567.5H315.5M308.5 555.5V567.5M315.5 555.5H323.5M315.5 567.5V555.5M323.5 567.5H330.5M323.5 555.5V567.5M330.5 555.5H338.5M330.5 567.5V555.5M338.5 567.5H345.5M338.5 555.5V567.5M345.5 555.5H353.5M345.5 567.5V555.5M353.5 567.5H360.5M353.5 555.5V567.5M360.5 555.5H368.5M360.5 567.5V555.5M368.5 567.5H375.5M368.5 555.5V567.5M375.5 555.5H383.5M375.5 567.5V555.5M383.5 567.5H390.5M383.5 555.5V567.5M390.5 555.5H398.5M390.5 567.5V555.5M398.5 567.5H405.5M398.5 555.5V567.5M405.5 555.5H413.5M405.5 567.5V555.5M413.5 567.5H420.5M413.5 555.5V567.5M420.5 555.5H428.5M420.5 567.5V555.5M428.5 567.5H435.5M428.5 555.5V567.5M435.5 555.5H443.5M435.5 567.5V555.5M443.5 567.5H450.5M443.5 555.5V567.5M450.5 555.5H458.5M450.5 567.5V555.5M458.5 567.5H465.5M458.5 555.5V567.5M465.5 555.5H473.5M465.5 567.5V555.5M473.5 567.5H480.5M473.5 555.5V567.5M480.5 555.5H488.5M480.5 567.5V555.5M488.5 567.5H495.5M488.5 555.5V567.5M495.5 555.5H503.5M495.5 567.5V555.5M503.5 567.5H510.5M503.5 555.5V567.5M510.5 555.5H518.5M510.5 567.5V555.5M518.5 567.5H525.5M518.5 555.5V567.5M525.5 555.5H533.5M525.5 567.5V555.5M533.5 567.5H540.5M533.5 555.5V567.5M540.5 555.5H548.5M540.5 567.5V555.5M548.5 567.5H555.5M548.5 555.5V567.5M555.5 555.5H563.5M555.5 567.5V555.5M563.5 567.5H570.5M563.5 555.5V567.5M570.5 555.5H578.5M570.5 567.5V555.5M578.5 567.5H585.5M578.5 555.5V567.5M585.5 555.5H593.5M585.5 567.5V555.5M593.5 567.5H600.5M593.5 555.5V567.5M600.5 555.5H608.5M600.5 567.5V555.5M608.5 567.5H615.5M608.5 555.5V567.5M615.5 555.5H623.5M615.5 567.5V555.5M623.5 567.5H630.5M623.5 555.5V567.5M630.5 555.5H638.5M630.5 567.5V555.5M638.5 567.5H645.5M638.5 555.5V567.5M645.5 555.5H653.5M645.5 567.5V555.5M653.5 567.5H660.5M653.5 555.5V567.5M660.5 555.5H668.5M660.5 567.5V555.5M668.5 567.5H675.5M668.5 555.5V567.5M675.5 555.5H683.5M675.5 567.5V555.5M683.5 567.5H690.5M683.5 555.5V567.5M690.5 555.5H698.5M690.5 567.5V555.5M698.5 567.5H705.5M698.5 555.5V567.5M705.5 555.5H713.5M705.5 567.5V555.5M713.5 567.5H720.5M713.5 555.5V567.5M720.5 555.5H728.5M720.5 567.5V555.5M728.5 567.5H735.5M728.5 555.5V567.5M735.5 555.5H743.5M735.5 567.5V555.5M743.5 567.5H750.5M743.5 555.5V567.5M750.5 555.5H758.5M750.5 567.5V555.5M758.5 567.5H765.5M758.5 555.5V567.5M765.5 555.5H773.5M765.5 567.5V555.5M773.5 567.5H780.5M773.5 555.5V567.5M780.5 555.5H788.5M780.5 567.5V555.5M788.5 567.5H795.5M788.5 555.5V567.5M795.5 555.5H803.5M795.5 567.5V555.5M803.5 567.5H810.5M803.5 555.5V567.5M810.5 555.5H818.5M810.5 567.5V555.5M818.5 567.5H825.5M818.5 555.5V567.5M825.5 555.5H833.5M825.5 567.5V555.5M833.5 567.5H840.5M833.5 555.5V567.5M840.5 555.5H848.5M840.5 567.5V555.5M848.5 567.5H854.5M848.5 555.5V567.5M854.5 555.5H862.5M854.5 567.5V555.5M862.5 567.5H869.5M862.5 555.5V567.5M869.5 555.5H877.5M869.5 567.5V555.5M877.5 567.5H884.5M877.5 555.5V567.5M884.5 555.5H892.5M884.5 567.5V555.5M892.5 567.5H899.5M892.5 555.5V567.5M899.5 555.5H907.5M899.5 567.5V555.5M907.5 567.5H914.5M907.5 555.5V567.5M914.5 555.5H922.5M914.5 567.5V555.5M922.5 567.5H929.5M922.5 555.5V567.5M929.5 555.5H937.5M929.5 567.5V555.5M937.5 567.5H944.5M937.5 555.5V567.5M944.5 555.5H952.5M944.5 567.5V555.5M952.5 567.5H959.5M952.5 555.5V567.5M959.5 555.5H967.5M959.5 567.5V555.5M967.5 567.5H974.5M967.5 555.5V567.5M974.5 555.5H982.5M974.5 567.5V555.5M982.5 567.5H989.5M982.5 555.5V567.5M989.5 555.5H997.5M989.5 567.5V555.5M997.5 567.5H1004.5M997.5 555.5V567.5M1004.5 555.5H1012.5M1004.5 567.5V555.5M1012.5 567.5H1019.5M1012.5 555.5V567.5M1019.5 555.5H1027.5M1019.5 567.5V555.5M1027.5 567.5H1034.5M1027.5 555.5V567.5M1034.5 555.5H1042.5M1034.5 567.5V555.5M1042.5 567.5H1049.5M1042.5 555.5V567.5M1049.5 555.5H1057.5M1049.5 567.5V555.5M1057.5 567.5H1064.5M1057.5 555.5V567.5M1064.5 555.5H1072.5M1064.5 567.5V555.5M1072.5 567.5H1079.5M1072.5 555.5V567.5M1079.5 555.5H1087.5M1079.5 567.5V555.5M1087.5 567.5H1094.5M1087.5 555.5V567.5M1094.5 555.5H1102.5M1094.5 567.5V555.5M1102.5 567.5H1109.5M1102.5 555.5V567.5M1109.5 555.5H1117.5M1109.5 567.5V555.5M1117.5 567.5H1124.5M1117.5 555.5V567.5M1124.5 555.5H1132.5M1124.5 567.5V555.5M1132.5 567.5H1139.5M1132.5 555.5V567.5M1139.5 555.5H1147.5M1139.5 567.5V555.5M1147.5 567.5H1154.5M1147.5 555.5V567.5M1154.5 555.5H1162.5M1154.5 567.5V555.5M1162.5 567.5H1169.5M1162.5 555.5V567.5M1169.5 555.5H1177.5M1169.5 567.5V555.5M1177.5 567.5H1184.5M1177.5 555.5V567.5M1184.5 555.5H1192.5M1184.5 567.5V555.5M1192.5 567.5H1199.5M1192.5 555.5V567.5M1199.5 555.5H1207.5M1199.5 567.5V555.5M1207.5 567.5H1214.5M1207.5 555.5V567.5M1214.5 555.5H1222.5M1214.5 567.5V555.5M1222.5 567.5H1229.5M1222.5 555.5V567.5M1229.5 555.5H1237.5M1229.5 567.5V555.5M1237.5 567.5H1244.5M1237.5 555.5V567.5M1244.5 555.5H1252.5M1244.5 567.5V555.5M1252.5 567.5H1259.5M1252.5 555.5V567.5M1259.5 555.5H1267.5M1259.5 567.5V555.5M1267.5 567.5H1274.5M1267.5 555.5V567.5M1274.5 555.5H1282.5M1274.5 567.5V555.5M1282.5 567.5H1289.5M1282.5 555.5V567.5M1289.5 555.5H1297.5M1289.5 567.5V555.5M1297.5 567.5H1304.5M1297.5 555.5V567.5M1304.5 555.5H1312.5M1304.5 567.5V555.5M1312.5 567.5H1319.5M1312.5 555.5V567.5M1319.5 555.5H1327.5M1319.5 567.5V555.5M1327.5 567.5H1334.5M1327.5 555.5V567.5M1334.5 555.5H1342.5M1334.5 567.5V555.5M1342.5 567.5H1349.5M1342.5 555.5V567.5M1349.5 555.5H1357.5M1349.5 567.5V555.5M1357.5 567.5H1364.5M1357.5 555.5V567.5M1364.5 555.5H1372.5M1364.5 567.5V555.5M1372.5 567.5H1379.5M1372.5 555.5V567.5M1379.5 555.5H1387.5M1379.5 567.5V555.5M1387.5 567.5H1394.5M1387.5 555.5V567.5M1394.5 555.5H1402.5M1394.5 567.5V555.5M1402.5 567.5H1409.5M1402.5 555.5V567.5M1409.5 555.5H1417.5M1409.5 567.5V555.5M1417.5 567.5H1424.5M1417.5 555.5V567.5M1424.5 555.5H1432.5M1424.5 567.5V555.5M1432.5 567.5H1439.5M1432.5 555.5V567.5M1439.5 555.5H1447.5M1439.5 567.5V555.5M1447.5 567.5H1454.5M1447.5 555.5V567.5M1454.5 555.5H1462.5M1454.5 567.5V555.5M1462.5 567.5H1469.5M1462.5 555.5V567.5M1469.5 555.5H1477.5M1469.5 567.5V555.5M1477.5 567.5H1484.5M1477.5 555.5V567.5M1484.5 555.5H1492.5M1484.5 567.5V555.5M1492.5 567.5H1499.5M1492.5 555.5V567.5M1499.5 555.5H1507.5M1499.5 567.5V555.5M1507.5 567.5H1514.5M1507.5 555.5V567.5M1514.5 555.5H1522.5M1514.5 567.5V555.5M1522.5 567.5H1529.5M1522.5 555.5V567.5M1529.5 555.5H1537.5M1529.5 567.5V555.5M1537.5 567.5H1544.5M1537.5 555.5V567.5M1544.5 555.5H1552.5M1544.5 567.5V555.5M1552.5 567.5H1559.5M1552.5 555.5V567.5M1559.5 555.5H1567.5M1559.5 567.5V555.5M1567.5 567.5H1574.5M1567.5 555.5V567.5M1574.5 555.5H1582.5M1574.5 567.5V555.5M1582.5 567.5H1589.5M1582.5 555.5V567.5M1589.5 555.5H1597.5M1589.5 567.5V555.5M1597.5 567.5H1604.5M1597.5 555.5V567.5M1604.5 555.5H1612.5M1604.5 567.5V555.5M1612.5 567.5H1619.5M1612.5 555.5V567.5M1619.5 555.5H1627.5M1619.5 567.5V555.5M1627.5 567.5H1634.5M1627.5 555.5V567.5M1634.5 555.5H1642.5M1634.5 567.5V555.5M1642.5 567.5H1649.5M1642.5 555.5V567.5M1649.5 555.5H1657.5M1649.5 567.5V555.5M1657.5 567.5H1664.5M1657.5 555.5V567.5M1664.5 555.5H1672.5M1664.5 567.5V555.5M1672.5 567.5H1679.5M1672.5 555.5V567.5M1679.5 555.5H1687.5M1679.5 567.5V555.5M1687.5 567.5H1694.5M1687.5 555.5V567.5M1694.5 555.5H1702.5M1694.5 567.5V555.5M1702.5 567.5H1709.5M1702.5 555.5V567.5M1709.5 555.5H1717.5M1709.5 567.5V555.5M1717.5 567.5H1724.5M1717.5 555.5V567.5M1724.5 555.5H1732.5M1724.5 567.5V555.5M1732.5 567.5H1738.5M1732.5 555.5V567.5M1738.5 555.5H1746.5M1738.5 567.5V555.5M1746.5 567.5H1753.5M1746.5 555.5V567.5M1753.5 555.5H1761.5M1753.5 567.5V555.5M1761.5 567.5H1768.5M1761.5 555.5V567.5M1768.5 555.5H1776.5M1768.5 567.5V555.5M1776.5 567.5H1783.5M1776.5 555.5V567.5M1783.5 555.5H1791.5M1783.5 567.5V555.5M1791.5 567.5H1798.5M1791.5 555.5V567.5M1798.5 555.5H1806.5M1798.5 567.5V555.5M1806.5 567.5H1813.5M1806.5 555.5V567.5M1813.5 555.5H1821.5M1813.5 567.5V555.5M1821.5 567.5H1828.5M1821.5 555.5V567.5M1828.5 555.5H1836.5M1828.5 567.5V555.5M1836.5 567.5H1843.5M1836.5 555.5V567.5M1843.5 555.5H1851.5M1843.5 567.5V555.5M1851.5 567.5H1858.5M1851.5 555.5V567.5M1858.5 555.5H1866.5M1858.5 567.5V555.5M1866.5 567.5H1873.5M1866.5 555.5V567.5M1873.5 555.5H1881.5M1873.5 567.5V555.5M1881.5 567.5H1888.5M1881.5 555.5V567.5M1888.5 555.5H1896.5M1888.5 567.5V555.5M1896.5 567.5H1900.5M1896.5 555.5V567.5M261.5 572.5H1900.5M261.5 589.5H510.5M510.5 601.5H525.5M510.5 589.5V601.5M525.5 589.5H540.5M525.5 601.5V589.5M540.5 601.5H555.5M540.5 589.5V601.5M555.5 589.5H570.5M555.5 601.5V589.5M570.5 601.5H585.5M570.5 589.5V601.5M585.5 589.5H600.5M585.5 601.5V589.5M600.5 601.5H615.5M600.5 589.5V601.5M615.5 589.5H630.5M615.5 601.5V589.5M630.5 601.5H645.5M630.5 589.5V601.5M645.5 589.5H660.5M645.5 601.5V589.5M660.5 601.5H675.5M660.5 589.5V601.5M675.5 589.5H690.5M675.5 601.5V589.5M690.5 601.5H705.5M690.5 589.5V601.5M705.5 589.5H720.5M705.5 601.5V589.5M720.5 601.5H735.5M720.5 589.5V601.5M735.5 589.5H750.5M735.5 601.5V589.5M750.5 601.5H765.5M750.5 589.5V601.5M765.5 589.5H780.5M765.5 601.5V589.5M780.5 601.5H795.5M780.5 589.5V601.5M795.5 589.5H810.5M795.5 601.5V589.5M810.5 601.5H825.5M810.5 589.5V601.5M825.5 589.5H840.5M825.5 601.5V589.5M840.5 601.5H855.5M840.5 589.5V601.5M855.5 589.5H870.5M855.5 601.5V589.5M870.5 601.5H885.5M870.5 589.5V601.5M885.5 589.5H900.5M885.5 601.5V589.5M900.5 601.5H915.5M900.5 589.5V601.5M915.5 589.5H930.5M915.5 601.5V589.5M930.5 601.5H945.5M930.5 589.5V601.5M945.5 589.5H959.5M945.5 601.5V589.5M959.5 601.5H974.5M959.5 589.5V601.5M974.5 589.5H989.5M974.5 601.5V589.5M989.5 601.5H1004.5M989.5 589.5V601.5M1004.5 589.5H1019.5M1004.5 601.5V589.5M1019.5 601.5H1034.5M1019.5 589.5V601.5M1034.5 589.5H1049.5M1034.5 601.5V589.5M1049.5 601.5H1057.5M1049.5 589.5V601.5M1057.5 589.5H1116.5M1057.5 601.5V589.5M1116.5 601.5H1124.5M1116.5 589.5V601.5M1124.5 589.5H1139.5M1124.5 601.5V589.5M1139.5 601.5H1154.5M1139.5 589.5V601.5M1154.5 589.5H1169.5M1154.5 601.5V589.5M1169.5 601.5H1184.5M1169.5 589.5V601.5M1184.5 589.5H1199.5M1184.5 601.5V589.5M1199.5 601.5H1214.5M1199.5 589.5V601.5M1214.5 589.5H1229.5M1214.5 601.5V589.5M1229.5 601.5H1244.5M1229.5 589.5V601.5M1244.5 589.5H1259.5M1244.5 601.5V589.5M1259.5 601.5H1274.5M1259.5 589.5V601.5M1274.5 589.5H1289.5M1274.5 601.5V589.5M1289.5 601.5H1304.5M1289.5 589.5V601.5M1304.5 589.5H1319.5M1304.5 601.5V589.5M1319.5 601.5H1334.5M1319.5 589.5V601.5M1334.5 589.5H1349.5M1334.5 601.5V589.5M1349.5 601.5H1364.5M1349.5 589.5V601.5M1364.5 589.5H1379.5M1364.5 601.5V589.5M1379.5 601.5H1394.5M1379.5 589.5V601.5M1394.5 589.5H1409.5M1394.5 601.5V589.5M1409.5 601.5H1424.5M1409.5 589.5V601.5M1424.5 589.5H1439.5M1424.5 601.5V589.5M1439.5 601.5H1454.5M1439.5 589.5V601.5M1454.5 589.5H1469.5M1454.5 601.5V589.5M1469.5 601.5H1484.5M1469.5 589.5V601.5M1484.5 589.5H1499.5M1484.5 601.5V589.5M1499.5 601.5H1514.5M1499.5 589.5V601.5M1514.5 589.5H1529.5M1514.5 601.5V589.5M1529.5 601.5H1544.5M1529.5 589.5V601.5M1544.5 589.5H1559.5M1544.5 601.5V589.5M1559.5 601.5H1574.5M1559.5 589.5V601.5M1574.5 589.5H1589.5M1574.5 601.5V589.5M1589.5 601.5H1604.5M1589.5 589.5V601.5M1604.5 589.5H1619.5M1604.5 601.5V589.5M1619.5 601.5H1634.5M1619.5 589.5V601.5M1634.5 589.5H1649.5M1634.5 601.5V589.5M1649.5 601.5H1664.5M1649.5 589.5V601.5M1664.5 589.5H1900.5M1664.5 601.5V589.5M261.5 606.5H495.5M495.5 618.5H517.5M495.5 606.5V618.5M517.5 606.5H577.5M517.5 618.5V606.5M577.5 618.5H607.5M577.5 606.5V618.5M607.5 606.5H637.5M607.5 618.5V606.5M637.5 618.5H757.5M637.5 606.5V618.5M787.5 618.5H817.5M787.5 612.5V618.5M817.5 606.5H847.5M817.5 618.5V606.5M847.5 618.5H907.5M847.5 606.5V618.5M907.5 606.5H937.5M907.5 618.5V606.5M937.5 618.5H967.5M937.5 606.5V618.5M967.5 606.5H1027.5M967.5 618.5V606.5M1057.5 606.5H1087.5M1057.5 612.5V606.5M1087.5 618.5H1327.5M1087.5 606.5V618.5M1327.5 606.5H1356.5M1327.5 618.5V606.5M1626.5 606.5H1656.5M1626.5 612.5V606.5M1656.5 618.5H1686.5M1656.5 606.5V618.5M1686.5 606.5H1900.5M1686.5 618.5V606.5M261.5 635.5H480.5M480.5 623.5H495.5M480.5 635.5V623.5M495.5 635.5H1900.5M495.5 623.5V635.5M261.5 686.5H495.5M495.5 674.5H1679.5M495.5 686.5V674.5M1679.5 686.5H1900.5M1679.5 674.5V686.5M261.5 703.5H1671.5M1671.5 691.5H1701.5M1671.5 703.5V691.5M1701.5 703.5H1900.5M1701.5 691.5V703.5M261.5 725.5H495.5M495.5 737.5H517.5M495.5 725.5V737.5M517.5 725.5H577.5M517.5 737.5V725.5M577.5 737.5H607.5M577.5 725.5V737.5M607.5 725.5H637.5M607.5 737.5V725.5M637.5 737.5H757.5M637.5 725.5V737.5M757.5 725.5H787.5M757.5 737.5V725.5M787.5 737.5H817.5M787.5 725.5V737.5M817.5 725.5H847.5M817.5 737.5V725.5M847.5 737.5H907.5M847.5 725.5V737.5M907.5 725.5H937.5M907.5 737.5V725.5M937.5 737.5H967.5M937.5 725.5V737.5M967.5 725.5H1027.5M967.5 737.5V725.5M1027.5 725.5H1057.5M1027.5 725.5V725.5M1057.5 725.5H1087.5M1057.5 725.5V725.5M1087.5 737.5H1327.5M1087.5 725.5V737.5M1327.5 725.5H1356.5M1327.5 737.5V725.5M1356.5 725.5H1626.5M1356.5 725.5V725.5M1626.5 725.5H1656.5M1626.5 725.5V725.5M1656.5 737.5H1686.5M1656.5 725.5V737.5M1686.5 725.5H1900.5M1686.5 737.5V725.5M261.5 754.5H757.5M757.5 742.5H787.5M757.5 754.5V742.5M787.5 754.5H1027.5M787.5 742.5V754.5M1027.5 742.5H1057.5M1027.5 754.5V742.5M1057.5 754.5H1356.5M1057.5 742.5V754.5M1356.5 742.5H1626.5M1356.5 754.5V742.5M1626.5 754.5H1900.5M1626.5 742.5V754.5M261.5 776.5H510.5M510.5 788.5H525.5M510.5 776.5V788.5M525.5 776.5H540.5M525.5 788.5V776.5M540.5 788.5H555.5M540.5 776.5V788.5M555.5 776.5H570.5M555.5 788.5V776.5M570.5 788.5H585.5M570.5 776.5V788.5M585.5 776.5H600.5M585.5 788.5V776.5M600.5 788.5H615.5M600.5 776.5V788.5M615.5 776.5H630.5M615.5 788.5V776.5M630.5 788.5H645.5M630.5 776.5V788.5M645.5 776.5H660.5M645.5 788.5V776.5M660.5 788.5H675.5M660.5 776.5V788.5M675.5 776.5H690.5M675.5 788.5V776.5M690.5 788.5H705.5M690.5 776.5V788.5M705.5 776.5H720.5M705.5 788.5V776.5M720.5 788.5H735.5M720.5 776.5V788.5M735.5 776.5H750.5M735.5 788.5V776.5M750.5 788.5H765.5M750.5 776.5V788.5M765.5 776.5H780.5M765.5 788.5V776.5M780.5 788.5H795.5M780.5 776.5V788.5M795.5 776.5H810.5M795.5 788.5V776.5M810.5 788.5H825.5M810.5 776.5V788.5M825.5 776.5H840.5M825.5 788.5V776.5M840.5 788.5H855.5M840.5 776.5V788.5M855.5 776.5H870.5M855.5 788.5V776.5M870.5 788.5H885.5M870.5 776.5V788.5M885.5 776.5H900.5M885.5 788.5V776.5M900.5 788.5H915.5M900.5 776.5V788.5M915.5 776.5H930.5M915.5 788.5V776.5M930.5 788.5H945.5M930.5 776.5V788.5M945.5 776.5H959.5M945.5 788.5V776.5M959.5 788.5H974.5M959.5 776.5V788.5M974.5 776.5H989.5M974.5 788.5V776.5M989.5 788.5H1004.5M989.5 776.5V788.5M1004.5 776.5H1019.5M1004.5 788.5V776.5M1019.5 788.5H1034.5M1019.5 776.5V788.5M1034.5 776.5H1049.5M1034.5 788.5V776.5M1049.5 788.5H1064.5M1049.5 776.5V788.5M1064.5 776.5H1079.5M1064.5 788.5V776.5M1079.5 788.5H1094.5M1079.5 776.5V788.5M1094.5 776.5H1109.5M1094.5 788.5V776.5M1109.5 788.5H1124.5M1109.5 776.5V788.5M1124.5 776.5H1139.5M1124.5 788.5V776.5M1139.5 788.5H1154.5M1139.5 776.5V788.5M1154.5 776.5H1169.5M1154.5 788.5V776.5M1169.5 788.5H1184.5M1169.5 776.5V788.5M1184.5 776.5H1199.5M1184.5 788.5V776.5M1199.5 788.5H1214.5M1199.5 776.5V788.5M1214.5 776.5H1229.5M1214.5 788.5V776.5M1229.5 788.5H1244.5M1229.5 776.5V788.5M1244.5 776.5H1259.5M1244.5 788.5V776.5M1259.5 788.5H1274.5M1259.5 776.5V788.5M1274.5 776.5H1289.5M1274.5 788.5V776.5M1289.5 788.5H1304.5M1289.5 776.5V788.5M1304.5 776.5H1319.5M1304.5 788.5V776.5M1319.5 788.5H1334.5M1319.5 776.5V788.5M1334.5 776.5H1349.5M1334.5 788.5V776.5M1349.5 788.5H1364.5M1349.5 776.5V788.5M1364.5 776.5H1379.5M1364.5 788.5V776.5M1379.5 788.5H1394.5M1379.5 776.5V788.5M1394.5 776.5H1409.5M1394.5 788.5V776.5M1409.5 788.5H1424.5M1409.5 776.5V788.5M1424.5 776.5H1439.5M1424.5 788.5V776.5M1439.5 788.5H1454.5M1439.5 776.5V788.5M1454.5 776.5H1469.5M1454.5 788.5V776.5M1469.5 788.5H1484.5M1469.5 776.5V788.5M1484.5 776.5H1499.5M1484.5 788.5V776.5M1499.5 788.5H1514.5M1499.5 776.5V788.5M1514.5 776.5H1529.5M1514.5 788.5V776.5M1529.5 788.5H1544.5M1529.5 776.5V788.5M1544.5 776.5H1559.5M1544.5 788.5V776.5M1559.5 788.5H1574.5M1559.5 776.5V788.5M1574.5 776.5H1589.5M1574.5 788.5V776.5M1589.5 788.5H1604.5M1589.5 776.5V788.5M1604.5 776.5H1619.5M1604.5 788.5V776.5M1619.5 788.5H1634.5M1619.5 776.5V788.5M1634.5 776.5H1649.5M1634.5 788.5V776.5M1649.5 788.5H1664.5M1649.5 776.5V788.5M1664.5 776.5H1900.5M1664.5 788.5V776.5M261.5 805.5H1900.5M261.5 844.5H1900.5M261.5 861.5H1671.5M1671.5 873.5H1722.5M1671.5 861.5V873.5M261.5 907.5H1671.5M1671.5 895.5H1701.5M1671.5 907.5V895.5M1701.5 907.5H1900.5M1701.5 895.5V907.5M261.5 941.5H1671.5M1671.5 929.5H1900.5M1671.5 941.5V929.5" stroke="#3cff1e"/>
<path d="M757.5 255.5H787.5M757.5 261.5V255.5M1027.5 255.5H1057.5M1027.5 249.5V255.5M1356.5 255.5H1626.5M1356.5 249.5V255.5M1722.5 272.5H1900.5M1722.5 278.5V272.5M1400.5 368.5H1430.5M1400.5 380.5H1430.5M1432.5 368.5H1460.5M1432.5 380.5H1460.5M1462.5 368.5H1490.5M1462.5 380.5H1490.5M1492.5 368.5H1519.5M1492.5 380.5H1519.5M1521.5 368.5H1550.5M1521.5 380.5H1550.5M1552.5 368.5H1579.5M1552.5 380.5H1579.5M1581.5 368.5H1609.5M1581.5 380.5H1609.5M1430.5 368.5V370.5M1432.5 368.5V370.5M1431.5 370.5V378.5M1430.5 378.5V380.5M1432.5 378.5V380.5M1460.5 368.5V370.5M1462.5 368.5V370.5M1461.5 370.5V378.5M1460.5 378.5V380.5M1462.5 378.5V380.5M1490.5 368.5V370.5M1492.5 368.5V370.5M1491.5 370.5V378.5M1490.5 378.5V380.5M1492.5 378.5V380.5M1519.5 368.5V370.5M1521.5 368.5V370.5M1520.5 370.5V378.5M1519.5 378.5V380.5M1521.5 378.5V380.5M1550.5 368.5V370.5M1552.5 368.5V370.5M1551.5 370.5V378.5M1550.5 378.5V380.5M1552.5 378.5V380.5M1579.5 368.5V370.5M1581.5 368.5V370.5M1580.5 370.5V378.5M1579.5 378.5V380.5M1581.5 378.5V380.5M1401.5 368.5V370.5M1401.5 378.5V380.5M1400.5 370.5V378.5M1609.5 368.5V370.5M1610.5 370.5V373.5M1609.5 380.5V378.5M1610.5 378.5V375.5M1610.5 373.5L1611.5 374.5L1610.5 375.5M1611.5 374.5H1900.5M757.5 612.5H787.5M757.5 618.5V612.5M1027.5 612.5H1057.5M1027.5 606.5V612.5M1356.5 612.5H1626.5M1356.5 606.5V612.5M1400.5 657.5H1430.5M1400.5 669.5H1430.5M1432.5 657.5H1460.5M1432.5 669.5H1460.5M1462.5 657.5H1490.5M1462.5 669.5H1490.5M1492.5 657.5H1519.5M1492.5 669.5H1519.5M1521.5 657.5H1550.5M1521.5 669.5H1550.5M1552.5 657.5H1579.5M1552.5 669.5H1579.5M1581.5 657.5H1609.5M1581.5 669.5H1609.5M1430.5 657.5V659.5M1432.5 657.5V659.5M1431.5 659.5V667.5M1430.5 667.5V669.5M1432.5 667.5V669.5M1460.5 657.5V659.5M1462.5 657.5V659.5M1461.5 659.5V667.5M1460.5 667.5V669.5M1462.5 667.5V669.5M1490.5 657.5V659.5M1492.5 657.5V659.5M1491.5 659.5V667.5M1490.5 667.5V669.5M1492.5 667.5V669.5M1519.5 657.5V659.5M1521.5 657.5V659.5M1520.5 659.5V667.5M1519.5 667.5V669.5M1521.5 667.5V669.5M1550.5 657.5V659.5M1552.5 657.5V659.5M1551.5 659.5V667.5M1550.5 667.5V669.5M1552.5 667.5V669.5M1579.5 657.5V659.5M1581.5 657.5V659.5M1580.5 659.5V667.5M1579.5 667.5V669.5M1581.5 667.5V669.5M1401.5 657.5V659.5M1401.5 667.5V669.5M1400.5 659.5V667.5M1609.5 657.5V659.5M1610.5 659.5V662.5M1609.5 669.5V667.5M1610.5 667.5V664.5M1610.5 662.5L1611.5 663.5L1610.5 664.5M1611.5 663.5H1900.5M1400.5 759.5H1430.5M1400.5 771.5H1430.5M1432.5 759.5H1460.5M1432.5 771.5H1460.5M1462.5 759.5H1490.5M1462.5 771.5H1490.5M1492.5 759.5H1519.5M1492.5 771.5H1519.5M1521.5 759.5H1550.5M1521.5 771.5H1550.5M1552.5 759.5H1579.5M1552.5 771.5H1579.5M1581.5 759.5H1609.5M1581.5 771.5H1609.5M1430.5 759.5V761.5M1432.5 759.5V761.5M1431.5 761.5V769.5M1430.5 769.5V771.5M1432.5 769.5V771.5M1460.5 759.5V761.5M1462.5 759.5V761.5M1461.5 761.5V769.5M1460.5 769.5V771.5M1462.5 769.5V771.5M1490.5 759.5V761.5M1492.5 759.5V761.5M1491.5 761.5V769.5M1490.5 769.5V771.5M1492.5 769.5V771.5M1519.5 759.5V761.5M1521.5 759.5V761.5M1520.5 761.5V769.5M1519.5 769.5V771.5M1521.5 769.5V771.5M1550.5 759.5V761.5M1552.5 759.5V761.5M1551.5 761.5V769.5M1550.5 769.5V771.5M1552.5 769.5V771.5M1579.5 759.5V761.5M1581.5 759.5V761.5M1580.5 761.5V769.5M1579.5 769.5V771.5M1581.5 769.5V771.5M1401.5 759.5V761.5M1401.5 769.5V771.5M1400.5 761.5V769.5M1609.5 759.5V761.5M1610.5 761.5V764.5M1609.5 771.5V769.5M1610.5 769.5V766.5M1610.5 764.5L1611.5 765.5L1610.5 766.5M1611.5 765.5H1900.5M1722.5 867.5H1900.5M1722.5 873.5V867.5M1400.5 878.5H1430.5M1400.5 890.5H1430.5M1432.5 878.5H1460.5M1432.5 890.5H1460.5M1462.5 878.5H1490.5M1462.5 890.5H1490.5M1492.5 878.5H1519.5M1492.5 890.5H1519.5M1521.5 878.5H1550.5M1521.5 890.5H1550.5M1552.5 878.5H1579.5M1552.5 890.5H1579.5M1581.5 878.5H1609.5M1581.5 890.5H1609.5M1430.5 878.5V880.5M1432.5 878.5V880.5M1431.5 880.5V888.5M1430.5 888.5V890.5M1432.5 888.5V890.5M1460.5 878.5V880.5M1462.5 878.5V880.5M1461.5 880.5V888.5M1460.5 888.5V890.5M1462.5 888.5V890.5M1490.5 878.5V880.5M1492.5 878.5V880.5M1491.5 880.5V888.5M1490.5 888.5V890.5M1492.5 888.5V890.5M1519.5 878.5V880.5M1521.5 878.5V880.5M1520.5 880.5V888.5M1519.5 888.5V890.5M1521.5 888.5V890.5M1550.5 878.5V880.5M1552.5 878.5V880.5M1551.5 880.5V888.5M1550.5 888.5V890.5M1552.5 888.5V890.5M1579.5 878.5V880.5M1581.5 878.5V880.5M1580.5 880.5V888.5M1579.5 888.5V890.5M1581.5 888.5V890.5M1401.5 878.5V880.5M1401.5 888.5V890.5M1400.5 880.5V888.5M1609.5 878.5V880.5M1610.5 880.5V883.5M1609.5 890.5V888.5M1610.5 888.5V885.5M1610.5 883.5L1611.5 884.5L1610.5 885.5M1611.5 884.5H1900.5M1672.5 918.5H1900.5" stroke="#0000ff"/>
<path d="M261.5 300.5H269.5M261.5 312.5H269.5M271.5 300.5H284.5M271.5 312.5H284.5M286.5 300.5H299.5M286.5 312.5H299.5M301.5 300.5H314.5M301.5 312.5H314.5M316.5 300.5H329.5M316.5 312.5H329.5M331.5 300.5H344.5M331.5 312.5H344.5M346.5 300.5H359.5M346.5 312.5H359.5M361.5 300.5H374.5M361.5 312.5H374.5M376.5 300.5H389.5M376.5 312.5H389.5M391.5 300.5H404.5M391.5 312.5H404.5M406.5 300.5H419.5M406.5 312.5H419.5M421.5 300.5H434.5M421.5 312.5H434.5M436.5 300.5H449.5M436.5 312.5H449.5M451.5 300.5H464.5M451.5 312.5H464.5M466.5 300.5H479.5M466.5 312.5H479.5M481.5 300.5H1900.5M481.5 312.5H1900.5M269.5 300.5V302.5M271.5 300.5V302.5M270.5 302.5V310.5M269.5 310.5V312.5M271.5 310.5V312.5M284.5 300.5V302.5M286.5 300.5V302.5M285.5 302.5V310.5M284.5 310.5V312.5M286.5 310.5V312.5M299.5 300.5V302.5M301.5 300.5V302.5M300.5 302.5V310.5M299.5 310.5V312.5M301.5 310.5V312.5M314.5 300.5V302.5M316.5 300.5V302.5M315.5 302.5V310.5M314.5 310.5V312.5M316.5 310.5V312.5M329.5 300.5V302.5M331.5 300.5V302.5M330.5 302.5V310.5M329.5 310.5V312.5M331.5 310.5V312.5M344.5 300.5V302.5M346.5 300.5V302.5M345.5 302.5V310.5M344.5 310.5V312.5M346.5 310.5V312.5M359.5 300.5V302.5M361.5 300.5V302.5M360.5 302.5V310.5M359.5 310.5V312.5M361.5 310.5V312.5M374.5 300.5V302.5M376.5 300.5V302.5M375.5 302.5V310.5M374.5 310.5V312.5M376.5 310.5V312.5M389.5 300.5V302.5M391.5 300.5V302.5M390.5 302.5V310.5M389.5 310.5V312.5M391.5 310.5V312.5M404.5 300.5V302.5M406.5 300.5V302.5M405.5 302.5V310.5M404.5 310.5V312.5M406.5 310.5V312.5M419.5 300.5V302.5M421.5 300.5V302.5M420.5 302.5V310.5M419.5 310.5V312.5M421.5 310.5V312.5M434.5 300.5V302.5M436.5 300.5V302.5M435.5 302.5V310.5M434.5 310.5V312.5M436.5 310.5V312.5M449.5 300.5V302.5M451.5 300.5V302.5M450.5 302.5V310.5M449.5 310.5V312.5M451.5 310.5V312.5M464.5 300.5V302.5M466.5 300.5V302.5M465.5 302.5V310.5M464.5 310.5V312.5M466.5 310.5V312.5M479.5 300.5V302.5M481.5 300.5V302.5M480.5 302.5V310.5M479.5 310.5V312.5M481.5 310.5V312.5M261.5 351.5H494.5M261.5 363.5H494.5M496.5 351.5H1678.5M496.5 363.5H1678.5M1680.5 351.5H1693.5M1680.5 363.5H1693.5M1695.5 351.5H1900.5M1695.5 363.5H1900.5M494.5 351.5V353.5M496.5 351.5V353.5M495.5 353.5V361.5M494.5 361.5V363.5M496.5 361.5V363.5M1678.5 351.5V353.5M1680.5 351.5V353.5M1679.5 353.5V361.5M1678.5 361.5V363.5M1680.5 361.5V363.5M1693.5 351.5V353.5M1695.5 351.5V353.5M1694.5 353.5V361.5M1693.5 361.5V363.5M1695.5 361.5V363.5M261.5 368.5H1399.5M261.5 380.5H1399.5M1399.5 368.5V370.5M1400.5 370.5V378.5M1399.5 378.5V380.5M261.5 487.5H494.5M261.5 499.5H494.5M496.5 487.5H1678.5M496.5 499.5H1678.5M1680.5 487.5H1693.5M1680.5 499.5H1693.5M1695.5 487.5H1900.5M1695.5 499.5H1900.5M494.5 487.5V489.5M496.5 487.5V489.5M495.5 489.5V497.5M494.5 497.5V499.5M496.5 497.5V499.5M1678.5 487.5V489.5M1680.5 487.5V489.5M1679.5 489.5V497.5M1678.5 497.5V499.5M1680.5 497.5V499.5M1693.5 487.5V489.5M1695.5 487.5V489.5M1694.5 489.5V497.5M1693.5 497.5V499.5M1695.5 497.5V499.5M261.5 504.5H494.5M261.5 516.5H494.5M496.5 504.5H1678.5M496.5 516.5H1678.5M1680.5 504.5H1693.5M1680.5 516.5H1693.5M1695.5 504.5H1900.5M1695.5 516.5H1900.5M494.5 504.5V506.5M496.5 504.5V506.5M495.5 506.5V514.5M494.5 514.5V516.5M496.5 514.5V516.5M1678.5 504.5V506.5M1680.5 504.5V506.5M1679.5 506.5V514.5M1678.5 514.5V516.5M1680.5 514.5V516.5M1693.5 504.5V506.5M1695.5 504.5V506.5M1694.5 506.5V514.5M1693.5 514.5V516.5M1695.5 514.5V516.5M261.5 521.5H1900.5M261.5 533.5H1900.5M261.5 640.5H1900.5M261.5 652.5H1900.5M261.5 657.5H1399.5M261.5 669.5H1399.5M1399.5 657.5V659.5M1400.5 659.5V667.5M1399.5 667.5V669.5M261.5 708.5H516.5M261.5 720.5H516.5M518.5 708.5H546.5M518.5 720.5H546.5M548.5 708.5H576.5M548.5 720.5H576.5M578.5 708.5H606.5M578.5 720.5H606.5M608.5 708.5H636.5M608.5 720.5H636.5M638.5 708.5H666.5M638.5 720.5H666.5M668.5 708.5H696.5M668.5 720.5H696.5M698.5 708.5H726.5M698.5 720.5H726.5M728.5 708.5H756.5M728.5 720.5H756.5M758.5 708.5H786.5M758.5 720.5H786.5M788.5 708.5H816.5M788.5 720.5H816.5M818.5 708.5H846.5M818.5 720.5H846.5M848.5 708.5H876.5M848.5 720.5H876.5M878.5 708.5H906.5M878.5 720.5H906.5M908.5 708.5H936.5M908.5 720.5H936.5M938.5 708.5H965.5M938.5 720.5H965.5M967.5 708.5H995.5M967.5 720.5H995.5M997.5 708.5H1025.5M997.5 720.5H1025.5M1027.5 708.5H1055.5M1027.5 720.5H1055.5M1057.5 708.5H1085.5M1057.5 720.5H1085.5M1087.5 708.5H1115.5M1087.5 720.5H1115.5M1117.5 708.5H1145.5M1117.5 720.5H1145.5M1147.5 708.5H1175.5M1147.5 720.5H1175.5M1177.5 708.5H1205.5M1177.5 720.5H1205.5M1207.5 708.5H1235.5M1207.5 720.5H1235.5M1237.5 708.5H1265.5M1237.5 720.5H1265.5M1267.5 708.5H1295.5M1267.5 720.5H1295.5M1297.5 708.5H1325.5M1297.5 720.5H1325.5M1327.5 708.5H1355.5M1327.5 720.5H1355.5M1357.5 708.5H1385.5M1357.5 720.5H1385.5M1387.5 708.5H1415.5M1387.5 720.5H1415.5M1417.5 708.5H1445.5M1417.5 720.5H1445.5M1447.5 708.5H1475.5M1447.5 720.5H1475.5M1477.5 708.5H1505.5M1477.5 720.5H1505.5M1507.5 708.5H1535.5M1507.5 720.5H1535.5M1537.5 708.5H1565.5M1537.5 720.5H1565.5M1567.5 708.5H1595.5M1567.5 720.5H1595.5M1597.5 708.5H1625.5M1597.5 720.5H1625.5M1627.5 708.5H1655.5M1627.5 720.5H1655.5M1657.5 708.5H1685.5M1657.5 720.5H1685.5M1687.5 708.5H1900.5M1687.5 720.5H1900.5M516.5 708.5V710.5M518.5 708.5V710.5M517.5 710.5V718.5M516.5 718.5V720.5M518.5 718.5V720.5M546.5 708.5V710.5M548.5 708.5V710.5M547.5 710.5V718.5M546.5 718.5V720.5M548.5 718.5V720.5M576.5 708.5V710.5M578.5 708.5V710.5M577.5 710.5V718.5M576.5 718.5V720.5M578.5 718.5V720.5M606.5 708.5V710.5M608.5 708.5V710.5M607.5 710.5V718.5M606.5 718.5V720.5M608.5 718.5V720.5M636.5 708.5V710.5M638.5 708.5V710.5M637.5 710.5V718.5M636.5 718.5V720.5M638.5 718.5V720.5M666.5 708.5V710.5M668.5 708.5V710.5M667.5 710.5V718.5M666.5 718.5V720.5M668.5 718.5V720.5M696.5 708.5V710.5M698.5 708.5V710.5M697.5 710.5V718.5M696.5 718.5V720.5M698.5 718.5V720.5M726.5 708.5V710.5M728.5 708.5V710.5M727.5 710.5V718.5M726.5 718.5V720.5M728.5 718.5V720.5M756.5 708.5V710.5M758.5 708.5V710.5M757.5 710.5V718.5M756.5 718.5V720.5M758.5 718.5V720.5M786.5 708.5V710.5M788.5 708.5V710.5M787.5 710.5V718.5M786.5 718.5V720.5M788.5 718.5V720.5M816.5 708.5V710.5M818.5 708.5V710.5M817.5 710.5V718.5M816.5 718.5V720.5M818.5 718.5V720.5M846.5 708.5V710.5M848.5 708.5V710.5M847.5 710.5V718.5M846.5 718.5V720.5M848.5 718.5V720.5M876.5 708.5V710.5M878.5 708.5V710.5M877.5 710.5V718.5M876.5 718.5V720.5M878.5 718.5V720.5M906.5 708.5V710.5M908.5 708.5V710.5M907.5 710.5V718.5M906.5 718.5V720.5M908.5 718.5V720.5M936.5 708.5V710.5M938.5 708.5V710.5M937.5 710.5V718.5M936.5 718.5V720.5M938.5 718.5V720.5M965.5 708.5V710.5M967.5 708.5V710.5M966.5 710.5V718.5M965.5 718.5V720.5M967.5 718.5V720.5M995.5 708.5V710.5M997.5 708.5V710.5M996.5 710.5V718.5M995.5 718.5V720.5M997.5 718.5V720.5M1025.5 708.5V710.5M1027.5 708.5V710.5M1026.5 710.5V718.5M1025.5 718.5V720.5M1027.5 718.5V720.5M1055.5 708.5V710.5M1057.5 708.5V710.5M1056.5 710.5V718.5M1055.5 718.5V720.5M1057.5 718.5V720.5M1085.5 708.5V710.5M1087.5 708.5V710.5M1086.5 710.5V718.5M1085.5 718.5V720.5M1087.5 718.5V720.5M1115.5 708.5V710.5M1117.5 708.5V710.5M1116.5 710.5V718.5M1115.5 718.5V720.5M1117.5 718.5V720.5M1145.5 708.5V710.5M1147.5 708.5V710.5M1146.5 710.5V718.5M1145.5 718.5V720.5M1147.5 718.5V720.5M1175.5 708.5V710.5M1177.5 708.5V710.5M1176.5 710.5V718.5M1175.5 718.5V720.5M1177.5 718.5V720.5M1205.5 708.5V710.5M1207.5 708.5V710.5M1206.5 710.5V718.5M1205.5 718.5V720.5M1207.5 718.5V720.5M1235.5 708.5V710.5M1237.5 708.5V710.5M1236.5 710.5V718.5M1235.5 718.5V720.5M1237.5 718.5V720.5M1265.5 708.5V710.5M1267.5 708.5V710.5M1266.5 710.5V718.5M1265.5 718.5V720.5M1267.5 718.5V720.5M1295.5 708.5V710.5M1297.5 708.5V710.5M1296.5 710.5V718.5M1295.5 718.5V720.5M1297.5 718.5V720.5M1325.5 708.5V710.5M1327.5 708.5V710.5M1326.5 710.5V718.5M1325.5 718.5V720.5M1327.5 718.5V720.5M1355.5 708.5V710.5M1357.5 708.5V710.5M1356.5 710.5V718.5M1355.5 718.5V720.5M1357.5 718.5V720.5M1385.5 708.5V710.5M1387.5 708.5V710.5M1386.5 710.5V718.5M1385.5 718.5V720.5M1387.5 718.5V720.5M1415.5 708.5V710.5M1417.5 708.5V710.5M1416.5 710.5V718.5M1415.5 718.5V720.5M1417.5 718.5V720.5M1445.5 708.5V710.5M1447.5 708.5V710.5M1446.5 710.5V718.5M1445.5 718.5V720.5M1447.5 718.5V720.5M1475.5 708.5V710.5M1477.5 708.5V710.5M1476.5 710.5V718.5M1475.5 718.5V720.5M1477.5 718.5V720.5M1505.5 708.5V710.5M1507.5 708.5V710.5M1506.5 710.5V718.5M1505.5 718.5V720.5M1507.5 718.5V720.5M1535.5 708.5V710.5M1537.5 708.5V710.5M1536.5 710.5V718.5M1535.5 718.5V720.5M1537.5 718.5V720.5M1565.5 708.5V710.5M1567.5 708.5V710.5M1566.5 710.5V718.5M1565.5 718.5V720.5M1567.5 718.5V720.5M1595.5 708.5V710.5M1597.5 708.5V710.5M1596.5 710.5V718.5M1595.5 718.5V720.5M1597.5 718.5V720.5M1625.5 708.5V710.5M1627.5 708.5V710.5M1626.5 710.5V718.5M1625.5 718.5V720.5M1627.5 718.5V720.5M1655.5 708.5V710.5M1657.5 708.5V710.5M1656.5 710.5V718.5M1655.5 718.5V720.5M1657.5 718.5V720.5M1685.5 708.5V710.5M1687.5 708.5V710.5M1686.5 710.5V718.5M1685.5 718.5V720.5M1687.5 718.5V720.5M261.5 759.5H1399.5M261.5 771.5H1399.5M1399.5 759.5V761.5M1400.5 761.5V769.5M1399.5 769.5V771.5M261.5 878.5H1399.5M261.5 890.5H1399.5M1399.5 878.5V880.5M1400.5 880.5V888.5M1399.5 888.5V890.5M261.5 912.5H1670.5M261.5 924.5H1670.5M1670.5 912.5V914.5M1671.5 914.5V917.5M1670.5 924.5V922.5M1671.5 922.5V919.5M1671.5 917.5L1672.5 918.5L1671.5 919.5M261.5 946.5H1670.5M261.5 958.5H1670.5M1670.5 946.5V948.5M1671.5 948.5V956.5M1670.5 956.5V958.5" stroke="#b4ffb4"/>
<rect x="481.5" y="575.5" width="34" height="52" stroke="#e02020"/>
<rect x="1076.5" y="579.5" width="39" height="46" stroke="#e02020"/>
<rect x="754.5" y="585.5" width="41" height="46" stroke="#2faa55"/>
<rect x="1019.5" y="582.5" width="46" height="44" stroke="#2faa55"/>
<rect x="1359.5" y="581.5" width="36" height="46" stroke="#1010ff"/>
<rect x="1392.5" y="576.5" width="231" height="44" stroke="#90ffff"/>
<rect x="1627.5" y="578.5" width="31" height="48" stroke="#90ffff"/>
<rect x="1661.5" y="578.5" width="39" height="57" stroke="#2e8b57"/>
</g>
</svg>
<div style="position:absolute;left:484.6px;top:301px;font-size:10.8px;line-height:13px;color:#fff;white-space:nowrap;">0028</div>
<div style="position:absolute;left:265.6px;top:352px;font-size:10.8px;line-height:13px;color:#fff;white-space:nowrap;">d06b00</div>
<div style="position:absolute;left:499.6px;top:352px;font-size:10.8px;line-height:13px;color:#fff;white-space:nowrap;">d06b03</div>
<div style="position:absolute;left:1698.6px;top:352px;font-size:10.8px;line-height:13px;color:#fff;white-space:nowrap;width:199.4px;overflow:hidden;">d01903</div>
<div style="position:absolute;left:265.6px;top:369px;font-size:10.8px;line-height:13px;color:#fff;white-space:nowrap;">00</div>
<div style="position:absolute;left:1405.0px;top:369px;font-size:10.8px;line-height:13px;color:#fff;white-space:nowrap;width:24.0px;overflow:hidden;">0Z</div>
<div style="position:absolute;left:1436.0px;top:369px;font-size:10.8px;line-height:13px;color:#fff;white-space:nowrap;width:23.0px;overflow:hidden;">0Z</div>
<div style="position:absolute;left:1466.0px;top:369px;font-size:10.8px;line-height:13px;color:#fff;white-space:nowrap;width:23.0px;overflow:hidden;">0Z</div>
<div style="position:absolute;left:1496.0px;top:369px;font-size:10.8px;line-height:13px;color:#fff;white-space:nowrap;width:22.0px;overflow:hidden;">0z</div>
<div style="position:absolute;left:1525.0px;top:369px;font-size:10.8px;line-height:13px;color:#fff;white-space:nowrap;width:24.0px;overflow:hidden;">Zz</div>
<div style="position:absolute;left:1556.0px;top:369px;font-size:10.8px;line-height:13px;color:#fff;white-space:nowrap;width:22.0px;overflow:hidden;">Zz</div>
<div style="position:absolute;left:1585.0px;top:369px;font-size:10.8px;line-height:13px;color:#fff;white-space:nowrap;width:23.0px;overflow:hidden;">Zz</div>
<div style="position:absolute;left:265.6px;top:488px;font-size:10.8px;line-height:13px;color:#fff;white-space:nowrap;">d06b00</div>
<div style="position:absolute;left:499.6px;top:488px;font-size:10.8px;line-height:13px;color:#fff;white-space:nowrap;">d06b03</div>
<div style="position:absolute;left:1698.6px;top:488px;font-size:10.8px;line-height:13px;color:#fff;white-space:nowrap;width:199.4px;overflow:hidden;">d01903</div>
<div style="position:absolute;left:265.6px;top:505px;font-size:10.8px;line-height:13px;color:#fff;white-space:nowrap;">00</div>
<div style="position:absolute;left:499.6px;top:505px;font-size:10.8px;line-height:13px;color:#fff;white-space:nowrap;">01</div>
<div style="position:absolute;left:1698.6px;top:505px;font-size:10.8px;line-height:13px;color:#fff;white-space:nowrap;width:199.4px;overflow:hidden;">03</div>
<div style="position:absolute;left:265.6px;top:522px;font-size:10.8px;line-height:13px;color:#fff;white-space:nowrap;">d048d1 d047d1 d046d1 d045d1 d044d1 d043d1 d040d1 d03fd1 d03ed1 d03dd1 d03cd1 d03bd1 d01c18 d01b18 d01a03 d01903 d06c00 d06b03 d06b00</div>
<div style="position:absolute;left:265.6px;top:641px;font-size:10.8px;line-height:13px;color:#fff;white-space:nowrap;">d04b01</div>
<div style="position:absolute;left:265.6px;top:658px;font-size:10.8px;line-height:13px;color:#fff;white-space:nowrap;">00</div>
<div style="position:absolute;left:1405.0px;top:658px;font-size:10.8px;line-height:13px;color:#fff;white-space:nowrap;width:24.0px;overflow:hidden;">0Z</div>
<div style="position:absolute;left:1436.0px;top:658px;font-size:10.8px;line-height:13px;color:#fff;white-space:nowrap;width:23.0px;overflow:hidden;">0Z</div>
<div style="position:absolute;left:1466.0px;top:658px;font-size:10.8px;line-height:13px;color:#fff;white-space:nowrap;width:23.0px;overflow:hidden;">0Z</div>
<div style="position:absolute;left:1496.0px;top:658px;font-size:10.8px;line-height:13px;color:#fff;white-space:nowrap;width:22.0px;overflow:hidden;">0z</div>
<div style="position:absolute;left:1525.0px;top:658px;font-size:10.8px;line-height:13px;color:#fff;white-space:nowrap;width:24.0px;overflow:hidden;">Zz</div>
<div style="position:absolute;left:1556.0px;top:658px;font-size:10.8px;line-height:13px;color:#fff;white-space:nowrap;width:22.0px;overflow:hidden;">Zz</div>
<div style="position:absolute;left:1585.0px;top:658px;font-size:10.8px;line-height:13px;color:#fff;white-space:nowrap;width:23.0px;overflow:hidden;">Zz</div>
<div style="position:absolute;left:265.6px;top:709px;font-size:10.8px;line-height:13px;color:#fff;white-space:nowrap;">0</div>
<div style="position:absolute;left:521.5px;top:709px;font-size:10.8px;line-height:13px;color:#fff;white-space:nowrap;width:23.5px;overflow:hidden;">1</div>
<div style="position:absolute;left:551.5px;top:709px;font-size:10.8px;line-height:13px;color:#fff;white-space:nowrap;width:23.5px;overflow:hidden;">2</div>
<div style="position:absolute;left:581.5px;top:709px;font-size:10.8px;line-height:13px;color:#fff;white-space:nowrap;width:23.5px;overflow:hidden;">3</div>
<div style="position:absolute;left:611.5px;top:709px;font-size:10.8px;line-height:13px;color:#fff;white-space:nowrap;width:23.5px;overflow:hidden;">4</div>
<div style="position:absolute;left:641.5px;top:709px;font-size:10.8px;line-height:13px;color:#fff;white-space:nowrap;width:23.5px;overflow:hidden;">5</div>
<div style="position:absolute;left:671.5px;top:709px;font-size:10.8px;line-height:13px;color:#fff;white-space:nowrap;width:23.5px;overflow:hidden;">6</div>
<div style="position:absolute;left:701.5px;top:709px;font-size:10.8px;line-height:13px;color:#fff;white-space:nowrap;width:23.5px;overflow:hidden;">7</div>
<div style="position:absolute;left:731.5px;top:709px;font-size:10.8px;line-height:13px;color:#fff;white-space:nowrap;width:23.5px;overflow:hidden;">8</div>
<div style="position:absolute;left:761.5px;top:709px;font-size:10.8px;line-height:13px;color:#fff;white-space:nowrap;width:23.5px;overflow:hidden;">9</div>
<div style="position:absolute;left:791.5px;top:709px;font-size:10.8px;line-height:13px;color:#fff;white-space:nowrap;width:23.5px;overflow:hidden;">10</div>
<div style="position:absolute;left:821.5px;top:709px;font-size:10.8px;line-height:13px;color:#fff;white-space:nowrap;width:23.5px;overflow:hidden;">11</div>
<div style="position:absolute;left:851.5px;top:709px;font-size:10.8px;line-height:13px;color:#fff;white-space:nowrap;width:23.5px;overflow:hidden;">12</div>
<div style="position:absolute;left:881.5px;top:709px;font-size:10.8px;line-height:13px;color:#fff;white-space:nowrap;width:23.5px;overflow:hidden;">13</div>
<div style="position:absolute;left:911.5px;top:709px;font-size:10.8px;line-height:13px;color:#fff;white-space:nowrap;width:23.5px;overflow:hidden;">14</div>
<div style="position:absolute;left:941.5px;top:709px;font-size:10.8px;line-height:13px;color:#fff;white-space:nowrap;width:22.5px;overflow:hidden;">15</div>
<div style="position:absolute;left:970.5px;top:709px;font-size:10.8px;line-height:13px;color:#fff;white-space:nowrap;width:23.5px;overflow:hidden;">16</div>
<div style="position:absolute;left:1000.5px;top:709px;font-size:10.8px;line-height:13px;color:#fff;white-space:nowrap;width:23.5px;overflow:hidden;">17</div>
<div style="position:absolute;left:1030.5px;top:709px;font-size:10.8px;line-height:13px;color:#fff;white-space:nowrap;width:23.5px;overflow:hidden;">18</div>
<div style="position:absolute;left:1060.5px;top:709px;font-size:10.8px;line-height:13px;color:#fff;white-space:nowrap;width:23.5px;overflow:hidden;">19</div>
<div style="position:absolute;left:1090.5px;top:709px;font-size:10.8px;line-height:13px;color:#fff;white-space:nowrap;width:23.5px;overflow:hidden;">20</div>
<div style="position:absolute;left:1120.5px;top:709px;font-size:10.8px;line-height:13px;color:#fff;white-space:nowrap;width:23.5px;overflow:hidden;">21</div>
<div style="position:absolute;left:1150.5px;top:709px;font-size:10.8px;line-height:13px;color:#fff;white-space:nowrap;width:23.5px;overflow:hidden;">22</div>
<div style="position:absolute;left:1180.5px;top:709px;font-size:10.8px;line-height:13px;color:#fff;white-space:nowrap;width:23.5px;overflow:hidden;">23</div>
<div style="position:absolute;left:1210.5px;top:709px;font-size:10.8px;line-height:13px;color:#fff;white-space:nowrap;width:23.5px;overflow:hidden;">24</div>
<div style="position:absolute;left:1240.5px;top:709px;font-size:10.8px;line-height:13px;color:#fff;white-space:nowrap;width:23.5px;overflow:hidden;">25</div>
<div style="position:absolute;left:1270.5px;top:709px;font-size:10.8px;line-height:13px;color:#fff;white-space:nowrap;width:23.5px;overflow:hidden;">26</div>
<div style="position:absolute;left:1300.5px;top:709px;font-size:10.8px;line-height:13px;color:#fff;white-space:nowrap;width:23.5px;overflow:hidden;">27</div>
<div style="position:absolute;left:1330.5px;top:709px;font-size:10.8px;line-height:13px;color:#fff;white-space:nowrap;width:23.5px;overflow:hidden;">28</div>
<div style="position:absolute;left:1360.5px;top:709px;font-size:10.8px;line-height:13px;color:#fff;white-space:nowrap;width:23.5px;overflow:hidden;">29</div>
<div style="position:absolute;left:1390.5px;top:709px;font-size:10.8px;line-height:13px;color:#fff;white-space:nowrap;width:23.5px;overflow:hidden;">30</div>
<div style="position:absolute;left:1420.5px;top:709px;font-size:10.8px;line-height:13px;color:#fff;white-space:nowrap;width:23.5px;overflow:hidden;">31</div>
<div style="position:absolute;left:1450.5px;top:709px;font-size:10.8px;line-height:13px;color:#fff;white-space:nowrap;width:23.5px;overflow:hidden;">32</div>
<div style="position:absolute;left:1480.5px;top:709px;font-size:10.8px;line-height:13px;color:#fff;white-space:nowrap;width:23.5px;overflow:hidden;">33</div>
<div style="position:absolute;left:1510.5px;top:709px;font-size:10.8px;line-height:13px;color:#fff;white-space:nowrap;width:23.5px;overflow:hidden;">34</div>
<div style="position:absolute;left:1540.5px;top:709px;font-size:10.8px;line-height:13px;color:#fff;white-space:nowrap;width:23.5px;overflow:hidden;">35</div>
<div style="position:absolute;left:1570.5px;top:709px;font-size:10.8px;line-height:13px;color:#fff;white-space:nowrap;width:23.5px;overflow:hidden;">36</div>
<div style="position:absolute;left:1600.5px;top:709px;font-size:10.8px;line-height:13px;color:#fff;white-space:nowrap;width:23.5px;overflow:hidden;">37</div>
<div style="position:absolute;left:1630.5px;top:709px;font-size:10.8px;line-height:13px;color:#fff;white-space:nowrap;width:23.5px;overflow:hidden;">38</div>
<div style="position:absolute;left:1660.5px;top:709px;font-size:10.8px;line-height:13px;color:#fff;white-space:nowrap;width:23.5px;overflow:hidden;">39</div>
<div style="position:absolute;left:1690.5px;top:709px;font-size:10.8px;line-height:13px;color:#fff;white-space:nowrap;">0</div>
<div style="position:absolute;left:265.6px;top:760px;font-size:10.8px;line-height:13px;color:#fff;white-space:nowrap;">00</div>
<div style="position:absolute;left:1405.0px;top:760px;font-size:10.8px;line-height:13px;color:#fff;white-space:nowrap;width:24.0px;overflow:hidden;">0Z</div>
<div style="position:absolute;left:1436.0px;top:760px;font-size:10.8px;line-height:13px;color:#fff;white-space:nowrap;width:23.0px;overflow:hidden;">0Z</div>
<div style="position:absolute;left:1466.0px;top:760px;font-size:10.8px;line-height:13px;color:#fff;white-space:nowrap;width:23.0px;overflow:hidden;">0Z</div>
<div style="position:absolute;left:1496.0px;top:760px;font-size:10.8px;line-height:13px;color:#fff;white-space:nowrap;width:22.0px;overflow:hidden;">0z</div>
<div style="position:absolute;left:1525.0px;top:760px;font-size:10.8px;line-height:13px;color:#fff;white-space:nowrap;width:24.0px;overflow:hidden;">Zz</div>
<div style="position:absolute;left:1556.0px;top:760px;font-size:10.8px;line-height:13px;color:#fff;white-space:nowrap;width:22.0px;overflow:hidden;">Zz</div>
<div style="position:absolute;left:1585.0px;top:760px;font-size:10.8px;line-height:13px;color:#fff;white-space:nowrap;width:23.0px;overflow:hidden;">Zz</div>
<div style="position:absolute;left:265.6px;top:879px;font-size:10.8px;line-height:13px;color:#fff;white-space:nowrap;">00</div>
<div style="position:absolute;left:1405.0px;top:879px;font-size:10.8px;line-height:13px;color:#fff;white-space:nowrap;width:24.0px;overflow:hidden;">0Z</div>
<div style="position:absolute;left:1436.0px;top:879px;font-size:10.8px;line-height:13px;color:#fff;white-space:nowrap;width:23.0px;overflow:hidden;">0Z</div>
<div style="position:absolute;left:1466.0px;top:879px;font-size:10.8px;line-height:13px;color:#fff;white-space:nowrap;width:23.0px;overflow:hidden;">0Z</div>
<div style="position:absolute;left:1496.0px;top:879px;font-size:10.8px;line-height:13px;color:#fff;white-space:nowrap;width:22.0px;overflow:hidden;">0z</div>
<div style="position:absolute;left:1525.0px;top:879px;font-size:10.8px;line-height:13px;color:#fff;white-space:nowrap;width:24.0px;overflow:hidden;">Zz</div>
<div style="position:absolute;left:1556.0px;top:879px;font-size:10.8px;line-height:13px;color:#fff;white-space:nowrap;width:22.0px;overflow:hidden;">Zz</div>
<div style="position:absolute;left:1585.0px;top:879px;font-size:10.8px;line-height:13px;color:#fff;white-space:nowrap;width:23.0px;overflow:hidden;">Zz</div>
<div style="position:absolute;left:265.6px;top:913px;font-size:10.8px;line-height:13px;color:#fff;white-space:nowrap;">00</div>
<div style="position:absolute;left:265.6px;top:947px;font-size:10.8px;line-height:13px;color:#fff;white-space:nowrap;">0000</div>
<div style="position:absolute;left:11px;top:961px;width:247px;height:3px;background:#fff"></div>
<div style="position:absolute;left:258px;top:961px;width:1646px;height:3px;background:#fff"></div>
<div style="position:absolute;left:11px;top:964px;width:45px;height:22px;background:#808080"></div>
<div style="position:absolute;left:56px;top:962px;width:157px;height:24px;background:#fff"></div>
<div style="position:absolute;left:215px;top:962px;width:40px;height:24px;background:#fff"></div>
<div style="position:absolute;left:56px;top:969px;width:146px;text-align:right;font-size:11px;line-height:13px;color:#000">Now</div>
<div style="position:absolute;left:215px;top:969px;width:40px;height:14px;overflow:hidden;font-size:11px;line-height:13px;color:#000;white-space:nowrap"><div style="position:absolute;right:9px;top:0">59000 ns</div></div>
<div style="position:absolute;left:11px;top:986px;width:202px;height:18px;background:#808080"></div>
<div style="position:absolute;left:215px;top:986px;width:40px;height:18px;background:#808080"></div>
<div style="position:absolute;left:56px;top:989px;width:146px;text-align:right;font-size:11px;line-height:13px;color:#fffff8">Cursor 1</div>
<div style="position:absolute;left:215px;top:989px;width:31px;text-align:right;font-size:11px;line-height:13px;color:#fffff8">0 ns</div>
<svg style="position:absolute;left:18px;top:964px" width="40" height="40" viewBox="0 0 40 40">
<path d="M3 12 L6 5 L9 12 M8 8 L11 4 L13 12" stroke="#606070" fill="none" stroke-width="1.4"/>
<path d="M3 14 H12" stroke="#3070d0" stroke-width="1.5"/>
<rect x="14" y="5" width="11" height="9" fill="#a8c8f0" stroke="#5080c0"/>
<path d="M16 8H23M16 10H21" stroke="#fff"/>
<circle cx="32" cy="9" r="5" fill="#40c040" stroke="#208020"/>
<path d="M29.5 9H34.5M32 6.5V11.5" stroke="#fff" stroke-width="1.5"/>
<rect x="9" y="29" width="9" height="8" fill="#e8b020" stroke="#b08010"/>
<path d="M11 29 V25 Q13.5 21 16 25 V29" stroke="#909090" fill="none" stroke-width="1.3"/>
<path d="M20 36 L28 26" stroke="#5080d0" stroke-width="3"/>
<circle cx="28" cy="25" r="2.5" fill="none" stroke="#5080d0" stroke-width="1.5"/>
<circle cx="34" cy="30" r="5" fill="#e04040" stroke="#b02020"/>
<path d="M31.5 30H36.5" stroke="#fff" stroke-width="1.6"/>
</svg>
<div style="position:absolute;left:11px;top:1004px;width:1897px;height:2px;background:#fff"></div>
<div style="position:absolute;left:11px;top:1006px;width:202px;height:18px;background:#808080"></div>
<div style="position:absolute;left:20px;top:1007px;width:192px;height:16px;background:#f4f4f4"></div>
<div style="position:absolute;left:20px;top:1007px;width:17px;height:16px;background:#f0f0f0;border-top:1px solid #fff;border-left:1px solid #fff;border-right:1px solid #696969;border-bottom:1px solid #696969;box-shadow:inset -1px -1px 0 #a0a0a0"></div><svg style="position:absolute;left:20px;top:1007px" width="17" height="16"><polygon points="10.5,4.0 6.5,8.0 10.5,12.0" fill="#000"/></svg>
<div style="position:absolute;left:195px;top:1007px;width:17px;height:16px;background:#f0f0f0;border-top:1px solid #fff;border-left:1px solid #fff;border-right:1px solid #696969;border-bottom:1px solid #696969;box-shadow:inset -1px -1px 0 #a0a0a0"></div><svg style="position:absolute;left:195px;top:1007px" width="17" height="16"><polygon points="6.5,4.0 10.5,8.0 6.5,12.0" fill="#000"/></svg>
<div style="position:absolute;left:215px;top:1006px;width:40px;height:18px;background:#808080"></div>
<div style="position:absolute;left:215px;top:1007px;width:40px;height:16px;background:#f4f4f4"></div>
<div style="position:absolute;left:215px;top:1007px;width:17px;height:16px;background:#f0f0f0;border-top:1px solid #fff;border-left:1px solid #fff;border-right:1px solid #696969;border-bottom:1px solid #696969;box-shadow:inset -1px -1px 0 #a0a0a0"></div><svg style="position:absolute;left:215px;top:1007px" width="17" height="16"><polygon points="10.5,4.0 6.5,8.0 10.5,12.0" fill="#808080"/></svg>
<div style="position:absolute;left:238px;top:1007px;width:17px;height:16px;background:#f0f0f0;border-top:1px solid #fff;border-left:1px solid #fff;border-right:1px solid #696969;border-bottom:1px solid #696969;box-shadow:inset -1px -1px 0 #a0a0a0"></div><svg style="position:absolute;left:238px;top:1007px" width="17" height="16"><polygon points="6.5,4.0 10.5,8.0 6.5,12.0" fill="#808080"/></svg>
<div style="position:absolute;left:258px;top:1004px;width:1646px;height:20px;background:#fff"></div>
<div style="position:absolute;left:258px;top:1005px;width:1646px;height:2px;background:#a0a0a0"></div>
<div style="position:absolute;left:258px;top:1007px;width:1646px;height:16px;background:#c8c8c8"></div>
<div style="position:absolute;left:259px;top:1007px;width:15px;height:16px;background:#f0f0f0;border-top:1px solid #fff;border-left:1px solid #fff;border-right:1px solid #696969;border-bottom:1px solid #696969;box-shadow:inset -1px -1px 0 #a0a0a0"></div><svg style="position:absolute;left:259px;top:1007px" width="15" height="16"><polygon points="9.5,4.0 5.5,8.0 9.5,12.0" fill="#000"/></svg>
<div style="position:absolute;left:275px;top:1008px;width:1px;height:14px;background:#f0c000"></div>
<div style="position:absolute;left:527px;top:1007px;width:1092px;height:16px;background:#f0f0f0;border-left:1px solid #fff;border-top:1px solid #fff;border-bottom:2px solid #808080;border-right:1px solid #808080"></div>
<div style="position:absolute;left:1887px;top:1007px;width:15px;height:16px;background:#f0f0f0;border-top:1px solid #fff;border-left:1px solid #fff;border-right:1px solid #696969;border-bottom:1px solid #696969;box-shadow:inset -1px -1px 0 #a0a0a0"></div><svg style="position:absolute;left:1887px;top:1007px" width="15" height="16"><polygon points="5.5,4.0 9.5,8.0 5.5,12.0" fill="#000"/></svg>
<div style="position:absolute;left:258px;top:964px;width:1646px;height:39px;background:#000"></div>
<svg style="position:absolute;left:0;top:0" width="1936" height="1056" shape-rendering="crispEdges"><path d="M262.5 967V971M267.5 967V971M273.5 967V971M279.5 967V971M285.5 967V971M291.5 964V971M297.5 967V971M303.5 967V971M308.5 967V971M314.5 967V971M320.5 967V971M326.5 967V971M332.5 967V971M338.5 967V971M344.5 967V971M349.5 964V971M355.5 967V971M361.5 967V971M367.5 967V971M373.5 967V971M379.5 967V971M385.5 967V971M390.5 967V971M396.5 967V971M402.5 967V971M408.5 964V971M414.5 967V971M420.5 967V971M426.5 967V971M431.5 967V971M437.5 967V971M443.5 967V971M449.5 967V971M455.5 967V971M461.5 967V971M466.5 964V971M472.5 967V971M478.5 967V971M484.5 967V971M490.5 967V971M496.5 967V971M502.5 967V971M507.5 967V971M513.5 967V971M519.5 967V971M525.5 964V971M531.5 967V971M537.5 967V971M543.5 967V971M548.5 967V971M554.5 967V971M560.5 967V971M566.5 967V971M572.5 967V971M578.5 967V971M584.5 964V971M589.5 967V971M595.5 967V971M601.5 967V971M607.5 967V971M613.5 967V971M619.5 967V971M625.5 967V971M630.5 967V971M636.5 967V971M642.5 964V971M648.5 967V971M654.5 967V971M660.5 967V971M666.5 967V971M671.5 967V971M677.5 967V971M683.5 967V971M689.5 967V971M695.5 967V971M701.5 964V971M706.5 967V971M712.5 967V971M718.5 967V971M724.5 967V971M730.5 967V971M736.5 967V971M742.5 967V971M747.5 967V971M753.5 967V971M759.5 964V971M765.5 967V971M771.5 967V971M777.5 967V971M783.5 967V971M788.5 967V971M794.5 967V971M800.5 967V971M806.5 967V971M812.5 967V971M818.5 964V971M824.5 967V971M829.5 967V971M835.5 967V971M841.5 967V971M847.5 967V971M853.5 967V971M859.5 967V971M865.5 967V971M870.5 967V971M876.5 964V971M882.5 967V971M888.5 967V971M894.5 967V971M900.5 967V971M906.5 967V971M911.5 967V971M917.5 967V971M923.5 967V971M929.5 967V971M935.5 964V971M941.5 967V971M947.5 967V971M952.5 967V971M958.5 967V971M964.5 967V971M970.5 967V971M976.5 967V971M982.5 967V971M987.5 967V971M993.5 964V971M999.5 967V971M1005.5 967V971M1011.5 967V971M1017.5 967V971M1023.5 967V971M1028.5 967V971M1034.5 967V971M1040.5 967V971M1046.5 967V971M1052.5 964V971M1058.5 967V971M1064.5 967V971M1069.5 967V971M1075.5 967V971M1081.5 967V971M1087.5 967V971M1093.5 967V971M1099.5 967V971M1105.5 967V971M1110.5 964V971M1116.5 967V971M1122.5 967V971M1128.5 967V971M1134.5 967V971M1140.5 967V971M1146.5 967V971M1151.5 967V971M1157.5 967V971M1163.5 967V971M1169.5 964V971M1175.5 967V971M1181.5 967V971M1187.5 967V971M1192.5 967V971M1198.5 967V971M1204.5 967V971M1210.5 967V971M1216.5 967V971M1222.5 967V971M1228.5 964V971M1233.5 967V971M1239.5 967V971M1245.5 967V971M1251.5 967V971M1257.5 967V971M1263.5 967V971M1268.5 967V971M1274.5 967V971M1280.5 967V971M1286.5 964V971M1292.5 967V971M1298.5 967V971M1304.5 967V971M1309.5 967V971M1315.5 967V971M1321.5 967V971M1327.5 967V971M1333.5 967V971M1339.5 967V971M1345.5 964V971M1350.5 967V971M1356.5 967V971M1362.5 967V971M1368.5 967V971M1374.5 967V971M1380.5 967V971M1386.5 967V971M1391.5 967V971M1397.5 967V971M1403.5 964V971M1409.5 967V971M1415.5 967V971M1421.5 967V971M1427.5 967V971M1432.5 967V971M1438.5 967V971M1444.5 967V971M1450.5 967V971M1456.5 967V971M1462.5 964V971M1468.5 967V971M1473.5 967V971M1479.5 967V971M1485.5 967V971M1491.5 967V971M1497.5 967V971M1503.5 967V971M1508.5 967V971M1514.5 967V971M1520.5 964V971M1526.5 967V971M1532.5 967V971M1538.5 967V971M1544.5 967V971M1549.5 967V971M1555.5 967V971M1561.5 967V971M1567.5 967V971M1573.5 967V971M1579.5 964V971M1585.5 967V971M1590.5 967V971M1596.5 967V971M1602.5 967V971M1608.5 967V971M1614.5 967V971M1620.5 967V971M1626.5 967V971M1631.5 967V971M1637.5 964V971M1643.5 967V971M1649.5 967V971M1655.5 967V971M1661.5 967V971M1667.5 967V971M1672.5 967V971M1678.5 967V971M1684.5 967V971M1690.5 967V971M1696.5 964V971M1702.5 967V971M1708.5 967V971M1713.5 967V971M1719.5 967V971M1725.5 967V971M1731.5 967V971M1737.5 967V971M1743.5 967V971M1749.5 967V971M1754.5 964V971M1760.5 967V971M1766.5 967V971M1772.5 967V971M1778.5 967V971M1784.5 967V971M1789.5 967V971M1795.5 967V971M1801.5 967V971M1807.5 967V971M1813.5 964V971M1819.5 967V971M1825.5 967V971M1830.5 967V971M1836.5 967V971M1842.5 967V971M1848.5 967V971M1854.5 967V971M1860.5 967V971M1866.5 967V971M1871.5 964V971M1877.5 967V971M1883.5 967V971M1889.5 967V971M1895.5 967V971M1901.5 967V971" stroke="#3cff1e"/><path d="M261 986.5H1901" stroke="#a0a0a0"/></svg>
<div style="position:absolute;left:309.5px;top:974px;width:80px;text-align:center;font-size:11px;line-height:13px;color:#3cff1e">80000 ns</div>
<div style="position:absolute;left:426.6px;top:974px;width:80px;text-align:center;font-size:11px;line-height:13px;color:#3cff1e">100000 ns</div>
<div style="position:absolute;left:543.7px;top:974px;width:80px;text-align:center;font-size:11px;line-height:13px;color:#3cff1e">120000 ns</div>
<div style="position:absolute;left:660.7px;top:974px;width:80px;text-align:center;font-size:11px;line-height:13px;color:#3cff1e">140000 ns</div>
<div style="position:absolute;left:777.8px;top:974px;width:80px;text-align:center;font-size:11px;line-height:13px;color:#3cff1e">160000 ns</div>
<div style="position:absolute;left:894.9px;top:974px;width:80px;text-align:center;font-size:11px;line-height:13px;color:#3cff1e">180000 ns</div>
<div style="position:absolute;left:1012.0px;top:974px;width:80px;text-align:center;font-size:11px;line-height:13px;color:#3cff1e">200000 ns</div>
<div style="position:absolute;left:1129.1px;top:974px;width:80px;text-align:center;font-size:11px;line-height:13px;color:#3cff1e">220000 ns</div>
<div style="position:absolute;left:1246.1px;top:974px;width:80px;text-align:center;font-size:11px;line-height:13px;color:#3cff1e">240000 ns</div>
<div style="position:absolute;left:1363.2px;top:974px;width:80px;text-align:center;font-size:11px;line-height:13px;color:#3cff1e">260000 ns</div>
<div style="position:absolute;left:1480.3px;top:974px;width:80px;text-align:center;font-size:11px;line-height:13px;color:#3cff1e">280000 ns</div>
<div style="position:absolute;left:1597.4px;top:974px;width:80px;text-align:center;font-size:11px;line-height:13px;color:#3cff1e">300000 ns</div>
<div style="position:absolute;left:1714.5px;top:974px;width:80px;text-align:center;font-size:11px;line-height:13px;color:#3cff1e">320000 ns</div>
<div style="position:absolute;left:1831.5px;top:974px;width:80px;text-align:center;font-size:11px;line-height:13px;color:#3cff1e">340000 ns</div>
<div style="position:absolute;left:1904px;top:138px;width:4px;height:886px;background:#fff"></div>
<div style="position:absolute;left:1906px;top:138px;width:1px;height:886px;background:#d0d0d0"></div>
<div style="position:absolute;left:1907px;top:138px;width:13px;height:19px;background:#888"></div>
<div style="position:absolute;left:1907px;top:160px;width:13px;height:802px;background:#f0f0f0"></div>
<div style="position:absolute;left:1907px;top:175px;width:13px;height:32px;background:#c8c8c8"></div>
<div style="position:absolute;left:1907px;top:895px;width:13px;height:50px;background:#c8c8c8"></div>
<div style="position:absolute;left:1907px;top:679px;width:13px;height:15px;background:#fff"></div>
<div style="position:absolute;left:1907px;top:161px;width:13px;height:14px;background:#f0f0f0;border-top:1px solid #fff;border-left:1px solid #fff;border-right:1px solid #696969;border-bottom:1px solid #696969;box-shadow:inset -1px -1px 0 #a0a0a0"></div><svg style="position:absolute;left:1907px;top:161px" width="13" height="14"><polygon points="2.5,9.0 6.5,5.0 10.5,9.0" fill="#000"/></svg>
<div style="position:absolute;left:1907px;top:945px;width:13px;height:13px;background:#f0f0f0;border-top:1px solid #fff;border-left:1px solid #fff;border-right:1px solid #696969;border-bottom:1px solid #696969;box-shadow:inset -1px -1px 0 #a0a0a0"></div><svg style="position:absolute;left:1907px;top:945px" width="13" height="13"><polygon points="2.5,4.5 6.5,8.5 10.5,4.5" fill="#000"/></svg>
<div style="position:absolute;left:1907px;top:962px;width:13px;height:42px;background:#888"></div>
<div style="position:absolute;left:1907px;top:1006px;width:13px;height:18px;background:#777"></div>
<div style="position:absolute;left:8px;top:1024px;width:1912px;height:16px;background:#f0f0f0"></div>
<div style="position:absolute;left:11px;top:1024px;width:1897px;height:1px;background:#a0a0a0"></div>
<div style="position:absolute;left:11px;top:1025px;width:1897px;height:1px;background:#fff"></div>
<div style="position:absolute;left:11px;top:1027px;width:1897px;height:1px;background:#b0b0b0"></div>
<div style="position:absolute;left:180px;top:1027px;width:1px;height:13px;background:#b0b0b0"></div>
<div style="position:absolute;left:17px;top:1031px;font-size:11px;line-height:13px;color:#000;white-space:nowrap">64899 ns to 345113 ns</div>
<div style="position:absolute;left:1920px;top:0;width:16px;height:313px;background:#000"></div>
<div style="position:absolute;left:1920px;top:313px;width:16px;height:727px;background:#2b2b2b"></div>
<svg style="position:absolute;left:1920px;top:318px" width="16" height="20"><circle cx="11" cy="5" r="1.5" fill="#fff"/><path d="M6 16 Q9 7 13 10 L16 16 Z" fill="none" stroke="#fff" stroke-width="1.2"/></svg>
<div style="position:absolute;left:1911px;top:525px;width:9px;height:57px;background:#505860;border-radius:3px 0 0 3px"></div>
<svg style="position:absolute;left:1913px;top:530px" width="6" height="48"><rect x="0" y="0.0" width="5" height="1" fill="#889"/><rect x="0" y="2.4" width="5" height="1" fill="#889"/><rect x="0" y="4.8" width="5" height="1" fill="#889"/><rect x="0" y="7.2" width="5" height="1" fill="#889"/><rect x="0" y="9.6" width="5" height="1" fill="#889"/><rect x="0" y="12.0" width="5" height="1" fill="#889"/><rect x="0" y="14.4" width="5" height="1" fill="#889"/><rect x="0" y="16.8" width="5" height="1" fill="#889"/><rect x="0" y="19.2" width="5" height="1" fill="#dd5"/><rect x="0" y="21.6" width="5" height="1" fill="#dd5"/><rect x="0" y="24.0" width="5" height="1" fill="#dd5"/><rect x="0" y="26.4" width="5" height="1" fill="#dd5"/><rect x="0" y="28.8" width="5" height="1" fill="#dd5"/><rect x="0" y="31.2" width="5" height="1" fill="#8dc"/><rect x="0" y="33.6" width="5" height="1" fill="#8dc"/><rect x="0" y="36.0" width="5" height="1" fill="#8dc"/><rect x="0" y="38.4" width="5" height="1" fill="#8dc"/><rect x="0" y="40.8" width="5" height="1" fill="#8dc"/><rect x="0" y="43.2" width="5" height="1" fill="#8dc"/></svg>
<div style="position:absolute;left:0;top:1040px;width:1936px;height:16px;background:#10283b"></div>
<div style="position:absolute;left:490px;top:1040px;width:48px;height:16px;background:#0c5494"></div>
<svg style="position:absolute;left:0;top:1040px" width="1936" height="16">
<path d="M16 13.5L23 12.5V16H16Z M24 12.3L32 11V16H24Z" fill="#fff"/>
<circle cx="71" cy="19" r="6" fill="none" stroke="#fff" stroke-width="1.6"/>
<path d="M112.5 16V12.5H124.5V16" fill="none" stroke="#fff" stroke-width="1.3"/><path d="M126 12V14" stroke="#fff"/>
<rect x="159" y="8" width="24" height="10" rx="2" fill="#555"/><polygon points="164,16 178,10 178,16" fill="#f0a020"/>
<polygon points="208,11 219,9 219,16 208,16" fill="#b01010"/><rect x="219" y="12" width="11" height="4" fill="#e8e8e8"/><rect x="221" y="12" width="3" height="3" fill="#d02020"/>
<circle cx="269" cy="22" r="11" fill="#e03a2a"/><path d="M259 18 Q263 13 268 13 L263 22Z" fill="#30a040"/>
<path d="M307 16V9H320L328 13V16Z" fill="#e8e8e8"/><path d="M322 14L329 5" stroke="#e0a020" stroke-width="2.2"/><path d="M328 6L330 4" stroke="#d03030" stroke-width="2"/>
<rect x="356" y="8.5" width="22" height="8" rx="2" fill="#6b6530"/>
<rect x="408" y="9" width="16" height="7" fill="#10283b" stroke="#fff" stroke-width="2"/>
<rect x="454" y="9" width="22" height="5" fill="#1010f0" stroke="#fff" stroke-width="1.5"/><rect x="454" y="14" width="22" height="2" fill="#c0c0c0"/>
<polygon points="506,13 513.5,8 521,13 521,16 506,16" fill="#5ab8f0"/><rect x="512" y="13" width="3" height="3" fill="#fff"/>
<rect x="1621" y="11" width="14" height="5" rx="1" fill="#1a90e0"/><path d="M1628 11V16" stroke="#fff"/>
<circle cx="1652" cy="19" r="6.5" fill="none" stroke="#5090ff" stroke-width="2"/>
<path d="M1669 12V16M1672 14V16" stroke="#fff"/>
<path d="M1703 13V16M1721 12Q1724 14 1721 16M1727 11Q1731 14 1727 17" stroke="#fff" fill="none"/>
<rect x="1745" y="13" width="10" height="3" fill="#000"/><path d="M1750 10V13" stroke="#fff"/>
<polygon points="1768,14 1782,9 1782,16 1768,16" fill="#e04818"/>
<rect x="1879" y="12" width="16" height="4" fill="none" stroke="#fff" stroke-width="2"/>
<path d="M1915.5 3V16" stroke="#3a5060"/><rect x="1916" y="0" width="20" height="16" fill="#143248"/>
</svg>
<div style="position:absolute;left:1805px;top:1043px;width:50px;text-align:center;font-size:11px;line-height:13px;color:#fff">17:18</div>
<div style="position:absolute;left:0;top:0;width:8px;height:1040px;background:#f0f0f0"></div>
<div style="position:absolute;left:3px;top:0;width:5px;height:40px;background:#fff"></div>
<div style="position:absolute;left:3px;top:4px;width:5px;height:2px;background:#1030f0"></div>
<div style="position:absolute;left:3px;top:9px;width:5px;height:9px;background:#000"></div>
<div style="position:absolute;left:1px;top:43px;width:1px;height:997px;background:#a0a0a0"></div>
<div style="position:absolute;left:3px;top:200px;width:4px;height:840px;background:#fff"></div>
<div style="position:absolute;left:5px;top:45px;width:1px;height:50px;background:#909090"></div>
<div style="position:absolute;left:5px;top:100px;width:1px;height:28px;background:#909090"></div>
<div style="position:absolute;left:3px;top:143px;width:4px;height:7px;background:#d02020"></div>
<div style="position:absolute;left:3px;top:150px;width:4px;height:15px;background:#c8d8f0"></div>
<div style="position:absolute;left:0px;top:43px;width:1px;height:997px;background:#a8a8a8"></div>
<div style="position:absolute;left:2px;top:43px;width:1px;height:997px;background:#a8a8a8"></div>
<div style="position:absolute;left:7px;top:0;width:2px;height:1040px;background:#9a9a9a"></div>
<div style="position:absolute;left:9px;top:136px;width:2px;height:888px;background:#fff"></div>
<div style="position:absolute;left:11px;top:138px;width:1px;height:886px;background:#a0a0a0"></div>
<svg style="position:absolute;left:17px;top:8px" width="16" height="16" viewBox="0 0 16 16"><rect x="0.5" y="0.5" width="14" height="14" fill="#d8d8d8" stroke="#404040"/><rect x="1" y="1" width="13" height="2.5" fill="#f8f8f8"/><rect x="1" y="4" width="13" height="10" fill="#000"/><path d="M1.5 7.5H4.5V5.5H8.5V7.5H12.5M1.5 11.5H3.5V9.5H6.5V12.5H8" stroke="#10c040" fill="none"/><path d="M5.5 4V14" stroke="#20e0e0"/><path d="M8 12.5H13.5" stroke="#4020e0"/><path d="M15.5 1V15.5H1" stroke="#000" fill="none"/></svg>
<svg style="position:absolute;left:12px;top:55px" width="16" height="16" viewBox="0 0 16 16"><rect x="0.5" y="0.5" width="14" height="14" fill="#d8d8d8" stroke="#404040"/><rect x="1" y="1" width="13" height="2.5" fill="#f8f8f8"/><rect x="1" y="4" width="13" height="10" fill="#000"/><path d="M1.5 7.5H4.5V5.5H8.5V7.5H12.5M1.5 11.5H3.5V9.5H6.5V12.5H8" stroke="#10c040" fill="none"/><path d="M5.5 4V14" stroke="#20e0e0"/><path d="M8 12.5H13.5" stroke="#4020e0"/><path d="M15.5 1V15.5H1" stroke="#000" fill="none"/></svg>
<svg style="position:absolute;left:1790px;top:0" width="130" height="30" fill="none" stroke="#555"><path d="M19 15.5H29"/><rect x="64.5" y="10.5" width="9" height="9"/><path d="M110 10L120 20M120 10L110 20"/></svg>
<div style="position:absolute;left:1878px;top:55px;width:12px;height:13px;background:#f0f0f0;border-right:1px solid #808080;border-bottom:1px solid #808080"></div>
<div style="position:absolute;left:1894px;top:55px;width:12px;height:13px;background:#f0f0f0;border-right:1px solid #808080;border-bottom:1px solid #808080"></div>
<div style="position:absolute;left:1910px;top:55px;width:10px;height:13px;background:#f0f0f0;border-right:1px solid #808080;border-bottom:1px solid #808080"></div>
<svg style="position:absolute;left:1878px;top:55px" width="42" height="13" stroke="#000" fill="none"><path d="M6 3V10M2.5 6.5H9.5" stroke-dasharray="1 1"/><path d="M19.5 5.5V10.5H24.5M20 10L27 3" stroke-width="1.5"/><path d="M34 3L40 10M40 3L34 10" stroke-width="2"/></svg>
<div style="position:absolute;left:895px;top:899px;width:182px;height:22px;background:#fff"></div>
<svg style="position:absolute;left:868px;top:892px" width="215" height="34"><g transform="rotate(-14 17 17)"><rect x="5" y="5" width="25" height="24" rx="4" fill="#f05a22"/></g><path d="M23 11Q16 9 11 14Q10 18 17 18Q23 19 20 23Q15 26 9 23" stroke="#fff" stroke-width="3.5" fill="none"/><g fill="none" stroke="#1e6fcf" stroke-width="1.6"><rect x="39" y="13" width="11" height="7"/><path d="M44.5 9V24"/><circle cx="62" cy="15" r="1.3"/><path d="M67 18Q68 20 66 22" stroke-width="2"/><circle cx="88" cy="18" r="7"/><path d="M85 20Q88 23 91 20"/><rect x="108" y="10" width="4" height="9" rx="2" fill="#1e6fcf"/><path d="M106 16Q110 23 114 16M110 21V25M107 25H113"/><rect x="125" y="12" width="15" height="11" rx="1.5"/><path d="M128 15.5H137M128 18.5H137" stroke-dasharray="1.5 1"/><circle cx="155" cy="13" r="3" fill="#b8c4d8" stroke="none"/><path d="M149 24Q150 17 155 17Q159 17 160 21V24Z" fill="#b8c4d8" stroke="none"/><rect x="157" y="19" width="6" height="6" fill="#fff" stroke="#b8c4d8" stroke-width="1"/><path d="M170 12L174 10Q176 12 178 10L182 12L181 16H179V24H173V16H171Z" fill="#1e6fcf" stroke="none"/><rect x="192" y="11" width="6" height="6" fill="#1e6fcf" stroke="none"/><rect x="200" y="11.5" width="5" height="5" fill="#fff" stroke-width="1.2"/><rect x="192" y="19" width="6" height="6" fill="#1e6fcf" stroke="none"/><rect x="200" y="19" width="6" height="6" fill="#1e6fcf" stroke="none"/></g></svg>
</body></html>
